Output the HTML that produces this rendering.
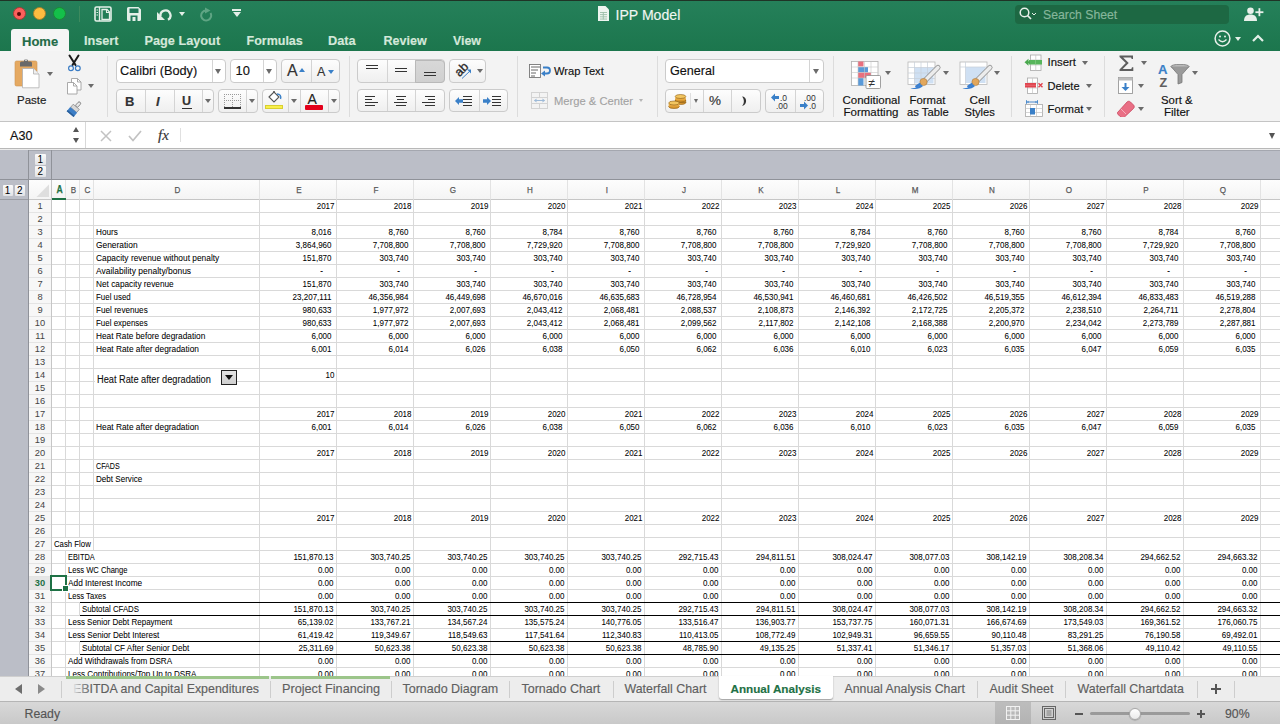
<!DOCTYPE html><html><head><meta charset="utf-8"><style>
*{box-sizing:border-box;margin:0;padding:0}
html,body{width:1280px;height:724px;overflow:hidden;background:#fff}
body{position:relative;font-family:"Liberation Sans",sans-serif;color:#222}
.a{position:absolute}
.t{position:absolute;white-space:nowrap;line-height:1;-webkit-text-stroke:0.15px currentColor}
.grp{position:absolute;border:1px solid #cbcbcb;border-radius:4px;background:linear-gradient(#fdfdfd,#efefef)}
.vd{position:absolute;top:0;bottom:0;width:1px;background:#d4d4d4}
.dd{position:absolute;width:0;height:0;border-left:3.5px solid transparent;border-right:3.5px solid transparent;border-top:5px solid #6b6b6b}
.sep{position:absolute;width:1px;background:#dcdcdc}
.c{position:absolute;white-space:nowrap;font-size:9px;line-height:13px;height:13px;color:#000}
.lb{transform:scaleX(0.928);transform-origin:0 50%;-webkit-text-stroke:0.05px #000}
.nm{transform:scaleX(0.89);transform-origin:100% 50%;-webkit-text-stroke:0.05px #000}
.r{text-align:right}
</style></head><body>
<div class="a" style="left:0;top:0;width:1280px;height:51px;background:linear-gradient(#25805a,#1c764d)"></div><div class="a" style="left:0;top:0;width:1280px;height:1px;background:#1f3326"></div><div class="a" style="left:12.5px;top:7px;width:13px;height:13px;border-radius:50%;background:#fc605c;border:0.8px solid #a83a36"></div><div class="a" style="left:32.5px;top:7px;width:13px;height:13px;border-radius:50%;background:#fdbc40;border:0.8px solid #a8802a"></div><div class="a" style="left:52.5px;top:7px;width:13px;height:13px;border-radius:50%;background:#14c04a;border:0.8px solid #1a8a35"></div><div class="a" style="left:17px;top:11.5px;width:4px;height:4px;border-radius:50%;background:#5a0a08"></div><div class="a" style="left:78.5px;top:6px;width:1px;height:16px;background:#3d8a5e"></div><svg class="a" style="left:94px;top:6px" width="18" height="16" viewBox="0 0 18 16"><rect x="1" y="1" width="16" height="14" rx="1.5" fill="none" stroke="#e4efe8" stroke-width="1.6"/><line x1="5.5" y1="1" x2="5.5" y2="15" stroke="#e4efe8" stroke-width="1.4"/><rect x="2.5" y="3.5" width="1.5" height="1" fill="#e4efe8"/><rect x="2.5" y="6" width="1.5" height="1" fill="#e4efe8"/><rect x="2.5" y="8.5" width="1.5" height="1" fill="#e4efe8"/><path d="M8 3.5h5l2.5 2.5v7.5h-7.5z" fill="none" stroke="#e4efe8" stroke-width="1.3"/><path d="M12.5 3.5v3h3" fill="none" stroke="#e4efe8" stroke-width="1.1"/></svg><svg class="a" style="left:126px;top:6px" width="16" height="16" viewBox="0 0 16 16"><path d="M1 2.5a1.5 1.5 0 0 1 1.5-1.5h10l2.5 2.5v10a1.5 1.5 0 0 1-1.5 1.5h-11A1.5 1.5 0 0 1 1 13.5z" fill="#e4efe8"/><rect x="3.5" y="2.5" width="9" height="4.5" fill="#21795a"/><rect x="4.5" y="9.5" width="7" height="5.5" fill="#21795a"/><rect x="6.5" y="11" width="3" height="4" fill="#e4efe8"/></svg><svg class="a" style="left:155px;top:7px" width="18" height="14" viewBox="0 0 18 14"><path d="M5.5 9a5 5 0 1 1 7.5 3.8" fill="none" stroke="#e4efe8" stroke-width="2.3"/><path d="M2 13v-8l8 8z" fill="#e4efe8"/></svg><div class="dd" style="left:179px;top:12px;border-top-color:#e4efe8;border-left-width:3px;border-right-width:3px;border-top-width:4px"></div><svg class="a" style="left:199px;top:7px" width="14" height="15" viewBox="0 0 14 15"><path d="M7 3.5A5 5 0 1 0 11.5 6" fill="none" stroke="#5fa584" stroke-width="2"/><path d="M6 0.5l5.5 3-5.5 3z" fill="#5fa584"/></svg><div class="a" style="left:232px;top:9px;width:9px;height:1.5px;background:#e4efe8"></div><div class="dd" style="left:232.5px;top:12px;border-top-color:#e4efe8;border-left-width:4px;border-right-width:4px;border-top-width:5px"></div><svg class="a" style="left:598px;top:6px" width="11" height="15" viewBox="0 0 11 15"><path d="M0 0h7.5l3.5 3.5V15H0z" fill="#eef5f0"/><g fill="#9bbfa8"><rect x="2" y="6" width="7" height="0.9"/><rect x="2" y="8.2" width="7" height="0.9"/><rect x="2" y="10.4" width="7" height="0.9"/><rect x="2" y="12.6" width="7" height="0.9"/><rect x="4.8" y="6" width="0.9" height="7.5"/></g></svg><div class="t" style="left:615.5px;top:8px;font-size:14.1px;color:#f0f6f2">IPP Model</div><div class="a" style="left:1015px;top:4.5px;width:214px;height:19px;border-radius:4px;background:#1d6843"></div><svg class="a" style="left:1019px;top:7px" width="18" height="13" viewBox="0 0 18 13"><circle cx="5.5" cy="5.5" r="4.3" fill="none" stroke="#e8f0ea" stroke-width="1.5"/><line x1="8.5" y1="8.5" x2="12" y2="12" stroke="#e8f0ea" stroke-width="1.7"/><path d="M13 6l2 2 2-2" fill="none" stroke="#e8f0ea" stroke-width="1"/></svg><div class="t" style="left:1043px;top:8.5px;font-size:12.25px;color:#86b69b">Search Sheet</div><svg class="a" style="left:1244px;top:7px" width="20" height="14" viewBox="0 0 20 14"><circle cx="6.5" cy="3.8" r="3.3" fill="#e8f0ea"/><path d="M0 14c0-4.5 2.5-6.5 6.5-6.5S13 9.5 13 14z" fill="#e8f0ea"/><rect x="14.5" y="1.2" width="1.8" height="8" fill="#e8f0ea"/><rect x="11.4" y="4.3" width="8" height="1.8" fill="#e8f0ea"/></svg><div class="a" style="left:11px;top:29px;width:58px;height:22px;background:#f5f5f5;border-radius:3px 3px 0 0"></div><div class="t" style="left:22px;top:34.5px;font-size:13px;font-weight:bold;color:#236b47">Home</div><div class="t" style="left:84px;top:34.5px;font-size:12.67px;font-weight:bold;color:#d4e8da">Insert</div><div class="t" style="left:144.5px;top:34.5px;font-size:12.72px;font-weight:bold;color:#d4e8da">Page Layout</div><div class="t" style="left:246.5px;top:34.5px;font-size:12.51px;font-weight:bold;color:#d4e8da">Formulas</div><div class="t" style="left:328px;top:34.5px;font-size:12.8px;font-weight:bold;color:#d4e8da">Data</div><div class="t" style="left:383.5px;top:34.5px;font-size:12.54px;font-weight:bold;color:#d4e8da">Review</div><div class="t" style="left:453px;top:34.5px;font-size:12.4px;font-weight:bold;color:#d4e8da">View</div><svg class="a" style="left:1214px;top:30px" width="17" height="17" viewBox="0 0 17 17"><circle cx="8.5" cy="8.5" r="7.4" fill="none" stroke="#e8f0ea" stroke-width="1.5"/><circle cx="6" cy="6.5" r="1" fill="#e8f0ea"/><circle cx="11" cy="6.5" r="1" fill="#e8f0ea"/><path d="M4.5 9.5q4 4.5 8 0" fill="none" stroke="#e8f0ea" stroke-width="1.3"/></svg><div class="dd" style="left:1235px;top:37px;border-top-color:#e4efe8;border-left-width:3px;border-right-width:3px;border-top-width:4px"></div><svg class="a" style="left:1252px;top:34px" width="12" height="8" viewBox="0 0 12 8"><path d="M1 7l5-5 5 5" fill="none" stroke="#e4efe8" stroke-width="2.2"/></svg><div class="a" style="left:0;top:51px;width:1280px;height:70px;background:#f3f3f3"></div><div class="a" style="left:0;top:121px;width:1280px;height:1px;background:#c4c4c4"></div><svg class="a" style="left:14px;top:57px" width="28" height="33" viewBox="0 0 28 33"><rect x="1" y="4" width="22" height="25" rx="1.5" fill="#e5a961" stroke="#cf9350" stroke-width="0.6"/><path d="M6 9.5v-3.5a1.5 1.5 0 0 1 1.5-1.5h2.3a2.2 2.2 0 0 1 4.4 0h2.3a1.5 1.5 0 0 1 1.5 1.5v3.5z" fill="#6a6a6a"/><circle cx="12" cy="3.2" r="0.9" fill="#ddd"/><path d="M8.5 11.5h11l5.5 5.5v13.8h-16.5z" fill="#fff" stroke="#b0b0b0" stroke-width="0.8"/><path d="M19.5 11.5v5.5h5.5" fill="#f0f0f0" stroke="#b0b0b0" stroke-width="0.8"/></svg><div class="dd" style="left:47.0px;top:71.75px;border-left-width:3.5px;border-right-width:3.5px;border-top-width:4.5px;border-top-color:#6b6b6b"></div><div class="t" style="left:17px;top:95px;font-size:11.5px;color:#222;">Paste</div><svg class="a" style="left:66px;top:54px" width="16" height="18" viewBox="0 0 16 18"><path d="M3.5 1.5l6 9.5M12.5 1.5l-6 9.5" stroke="#1a1a1a" stroke-width="2" stroke-linecap="round"/><circle cx="5" cy="14.2" r="2.4" fill="none" stroke="#3a7cc4" stroke-width="1.2"/><circle cx="11.8" cy="14.2" r="2.4" fill="none" stroke="#3a7cc4" stroke-width="1.2"/></svg><svg class="a" style="left:66px;top:77px" width="16" height="18" viewBox="0 0 16 18"><path d="M5.5 1.5h6l3.5 3.5v8h-9.5z" fill="#fff" stroke="#a0a0a0" stroke-width="0.9"/><path d="M11.5 1.5v3.5h3.5" fill="none" stroke="#a0a0a0" stroke-width="0.9"/><path d="M1.5 5.5h6l3.5 3.5v8h-9.5z" fill="#fff" stroke="#a0a0a0" stroke-width="0.9"/><path d="M7.5 5.5v3.5h3.5" fill="none" stroke="#a0a0a0" stroke-width="0.9"/></svg><div class="dd" style="left:88.0px;top:83.75px;border-left-width:3.5px;border-right-width:3.5px;border-top-width:4.5px;border-top-color:#6b6b6b"></div><svg class="a" style="left:65px;top:101px" width="18" height="17" viewBox="0 0 18 17"><g transform="rotate(40 9 8.5)"><rect x="7.5" y="-1" width="3" height="6" rx="1.5" fill="#e8e8e8" stroke="#777" stroke-width="0.8"/><rect x="5" y="5" width="8" height="4" fill="#d8d8d8" stroke="#888" stroke-width="0.7"/><path d="M4.5 9h9v5.5h-9z" fill="#3c7ec6"/><path d="M4.5 13h9v1.5h-9z" fill="#2a5f9a"/></g></svg><div class="sep" style="left:107px;top:56px;height:61px"></div><div class="grp" style="left:115.5px;top:59px;width:110.0px;height:23.5px;background:#fff"><div class="vd" style="left:95.5px"></div></div><div class="t" style="left:120px;top:65px;font-size:12.75px;color:#111;">Calibri (Body)</div><div class="dd" style="left:215.0px;top:69.0px;border-left-width:3.5px;border-right-width:3.5px;border-top-width:5px;border-top-color:#6b6b6b"></div><div class="grp" style="left:230.0px;top:59px;width:46.5px;height:23.5px;background:#fff"><div class="vd" style="left:31.5px"></div></div><div class="t" style="left:235.5px;top:65px;font-size:12.9px;color:#111;">10</div><div class="dd" style="left:266.0px;top:69.0px;border-left-width:3.5px;border-right-width:3.5px;border-top-width:5px;border-top-color:#6b6b6b"></div><div class="grp" style="left:280.5px;top:59px;width:59.0px;height:23.5px;"><div class="vd" style="left:29.0px"></div></div><div class="t" style="left:287px;top:63px;font-size:16px;color:#333;">A</div><div class="a" style="left:299px;top:68px;width:0;height:0;border-left:3.5px solid transparent;border-right:3.5px solid transparent;border-bottom:4px solid #3a80c8"></div><div class="t" style="left:317px;top:66px;font-size:12.5px;color:#333;">A</div><div class="a" style="left:328px;top:70px;width:0;height:0;border-left:3.5px solid transparent;border-right:3.5px solid transparent;border-top:4px solid #3a80c8"></div><div class="grp" style="left:115.5px;top:89px;width:98.0px;height:23.5px;"><div class="vd" style="left:28.0px"></div><div class="vd" style="left:57.0px"></div><div class="vd" style="left:85.0px"></div></div><div class="t" style="left:125px;top:94.5px;font-size:13px;color:#333;font-weight:bold">B</div><div class="t" style="left:156px;top:94.5px;font-size:13px;color:#333;font-style:italic;font-weight:bold">I</div><div class="t" style="left:182px;top:94.5px;font-size:12.5px;color:#333;font-weight:bold">U</div><div class="a" style="left:182px;top:107.5px;width:9.5px;height:1px;background:#333"></div><div class="dd" style="left:204.5px;top:98.75px;border-left-width:3px;border-right-width:3px;border-top-width:4.5px;border-top-color:#6b6b6b"></div><div class="grp" style="left:218.0px;top:89px;width:40.0px;height:23.5px;"><div class="vd" style="left:26.5px"></div></div><div class="a" style="left:224px;top:93.5px;width:17px;height:13px;border:1px dotted #9a9a9a;border-bottom:none"></div><div class="a" style="left:232px;top:93.5px;width:1px;height:13px;border-left:1px dotted #9a9a9a"></div><div class="a" style="left:224px;top:100px;width:17px;height:1px;border-top:1px dotted #9a9a9a"></div><div class="a" style="left:224px;top:107px;width:17px;height:1.5px;background:#333"></div><div class="dd" style="left:248.5px;top:98.75px;border-left-width:3px;border-right-width:3px;border-top-width:4.5px;border-top-color:#6b6b6b"></div><div class="grp" style="left:262.0px;top:89px;width:78.0px;height:23.5px;"><div class="vd" style="left:24.5px"></div><div class="vd" style="left:37.0px"></div><div class="vd" style="left:64.5px"></div></div><svg class="a" style="left:267px;top:91px" width="16" height="14" viewBox="0 0 16 14"><path d="M2 6l5-5 5 5-5 5z" fill="#fff" stroke="#555" stroke-width="1.1"/><path d="M7 1v-1" stroke="#555" stroke-width="1.5"/><path d="M10 3c3 0 4.5 2 3.5 5" fill="none" stroke="#3a80c8" stroke-width="1.4"/></svg><div class="a" style="left:265px;top:105px;width:18px;height:4px;background:#f8ef4b;border:0.5px solid #d8cf30"></div><div class="dd" style="left:290.5px;top:98.75px;border-left-width:3px;border-right-width:3px;border-top-width:4.5px;border-top-color:#6b6b6b"></div><div class="t" style="left:307.5px;top:92px;font-size:14px;color:#222;">A</div><div class="a" style="left:305px;top:105px;width:18px;height:5px;background:#e3001b;border-radius:1px"></div><div class="dd" style="left:330.5px;top:98.75px;border-left-width:3px;border-right-width:3px;border-top-width:4.5px;border-top-color:#6b6b6b"></div><div class="sep" style="left:349px;top:56px;height:61px"></div><div class="grp" style="left:357.0px;top:58.5px;width:88.0px;height:24.0px;"><div class="vd" style="left:28.5px"></div><div class="vd" style="left:57.0px"></div></div><div class="a" style="left:415px;top:59.5px;width:29.5px;height:23px;background:linear-gradient(#d8d8d8,#d0d0d0);border:1px solid #b9b9b9;border-radius:0 4px 4px 0"></div><div class="a" style="left:366px;top:65px;width:12px;height:1.3px;background:#333"></div><div class="a" style="left:366px;top:68px;width:12px;height:1.3px;background:#333"></div><div class="a" style="left:395px;top:68px;width:12px;height:1.3px;background:#333"></div><div class="a" style="left:395px;top:71px;width:12px;height:1.3px;background:#333"></div><div class="a" style="left:424px;top:72px;width:12px;height:1.3px;background:#333"></div><div class="a" style="left:424px;top:75px;width:12px;height:1.3px;background:#333"></div><div class="grp" style="left:449.0px;top:58.5px;width:37.0px;height:24.0px;"></div><svg class="a" style="left:452px;top:60px" width="24" height="22" viewBox="0 0 24 22"><text x="9.5" y="13.5" text-anchor="middle" transform="rotate(-45 9.5 9.5)" font-family="Liberation Sans" font-size="12.5" fill="#2a2a2a" stroke="#2a2a2a" stroke-width="0.3">ab</text><path d="M10 18.5l8.5-8" stroke="#3a80c8" stroke-width="1"/><path d="M15 9.5h4v4z" fill="#3a80c8"/></svg><div class="dd" style="left:476.5px;top:68.75px;border-left-width:3px;border-right-width:3px;border-top-width:4.5px;border-top-color:#6b6b6b"></div><div class="grp" style="left:357.0px;top:89px;width:88.0px;height:23px;"><div class="vd" style="left:28.5px"></div><div class="vd" style="left:57.0px"></div></div><div class="a" style="left:365px;top:96px;width:10px;height:1.1px;background:#333"></div><div class="a" style="left:365px;top:99px;width:7px;height:1.1px;background:#333"></div><div class="a" style="left:365px;top:102px;width:13px;height:1.1px;background:#333"></div><div class="a" style="left:365px;top:105px;width:10px;height:1.1px;background:#333"></div><div class="a" style="left:395.5px;top:96px;width:10px;height:1.1px;background:#333"></div><div class="a" style="left:397.0px;top:99px;width:7px;height:1.1px;background:#333"></div><div class="a" style="left:394.0px;top:102px;width:13px;height:1.1px;background:#333"></div><div class="a" style="left:395.5px;top:105px;width:10px;height:1.1px;background:#333"></div><div class="a" style="left:425px;top:96px;width:10px;height:1.1px;background:#333"></div><div class="a" style="left:428px;top:99px;width:7px;height:1.1px;background:#333"></div><div class="a" style="left:422px;top:102px;width:13px;height:1.1px;background:#333"></div><div class="a" style="left:425px;top:105px;width:10px;height:1.1px;background:#333"></div><div class="grp" style="left:449.0px;top:89px;width:59.0px;height:23px;"><div class="vd" style="left:28.5px"></div></div><div class="a" style="left:463px;top:96px;width:9px;height:1.1px;background:#333"></div><div class="a" style="left:463px;top:99px;width:9px;height:1.1px;background:#333"></div><div class="a" style="left:463px;top:102px;width:9px;height:1.1px;background:#333"></div><div class="a" style="left:463px;top:105px;width:9px;height:1.1px;background:#333"></div><div class="a" style="left:492px;top:96px;width:9px;height:1.1px;background:#333"></div><div class="a" style="left:492px;top:99px;width:9px;height:1.1px;background:#333"></div><div class="a" style="left:492px;top:102px;width:9px;height:1.1px;background:#333"></div><div class="a" style="left:492px;top:105px;width:9px;height:1.1px;background:#333"></div><svg class="a" style="left:455px;top:97px" width="8" height="8" viewBox="0 0 8 8"><path d="M0 4l4-4v2.2h4v3.6h-4v2.2z" fill="#3a80c8"/></svg><svg class="a" style="left:483px;top:97px" width="8" height="8" viewBox="0 0 8 8"><path d="M8 4l-4-4v2.2h-4v3.6h4v2.2z" fill="#3a80c8"/></svg><div class="sep" style="left:517px;top:56px;height:61px"></div><svg class="a" style="left:529px;top:64px" width="22" height="15" viewBox="0 0 22 15"><rect x="0.5" y="0.5" width="11" height="13" fill="#fff" stroke="#777" stroke-width="0.9"/><path d="M2 3h9M2 6h7M2 9h5M2 12h4" stroke="#555" stroke-width="0.9"/><path d="M14 3.5h4a3 3 0 0 1 0 6h-3" fill="none" stroke="#3a80c8" stroke-width="1.8"/><path d="M12 9.5l4-3v6z" fill="#3a80c8"/></svg><div class="t" style="left:554px;top:65.5px;font-size:11.15px;color:#111;">Wrap Text</div><svg class="a" style="left:531px;top:92px" width="17" height="17" viewBox="0 0 17 17"><rect x="0.5" y="0.5" width="16" height="16" fill="none" stroke="#d3d3d3"/><path d="M0.5 5.5h16M0.5 11.5h16M8.5 0.5v5M8.5 11.5v5" stroke="#d3d3d3"/><path d="M3.5 8.5h10" stroke="#9dbad8" stroke-width="1"/><path d="M3 8.5l2.5-2v4zM14 8.5l-2.5-2v4z" fill="#9dbad8"/></svg><div class="t" style="left:554px;top:95.5px;font-size:11.2px;color:#a3a3a3;">Merge &amp; Center</div><div class="dd" style="left:638.5px;top:99.25px;border-left-width:2.5px;border-right-width:2.5px;border-top-width:3.5px;border-top-color:#b5b5b5"></div><div class="sep" style="left:656.5px;top:56px;height:61px"></div><div class="grp" style="left:665.0px;top:58.5px;width:159.0px;height:24.0px;background:#fff"><div class="vd" style="left:143.0px"></div></div><div class="t" style="left:670px;top:65px;font-size:12.6px;color:#111;">General</div><div class="dd" style="left:813.0px;top:68.5px;border-left-width:3.5px;border-right-width:3.5px;border-top-width:5px;border-top-color:#6b6b6b"></div><div class="grp" style="left:665.0px;top:88.5px;width:96.0px;height:24.0px;"><div class="vd" style="left:36.75px"></div><div class="vd" style="left:65.25px"></div></div><div class="a" style="left:690px;top:93px;width:1px;height:16px;background:#dedede"></div><svg class="a" style="left:667px;top:93px" width="20" height="17" viewBox="0 0 20 17"><g stroke="#8a5a12" stroke-width="0.6"><ellipse cx="13.5" cy="9.5" rx="5.3" ry="2" fill="#d8962e"/><rect x="8.2" y="7.5" width="10.6" height="2" fill="#e6a840"/><ellipse cx="13.5" cy="7" rx="5.3" ry="2" fill="#d8962e"/><rect x="8.2" y="4.5" width="10.6" height="2.5" fill="#e6a840" stroke="none"/><ellipse cx="13.5" cy="3.5" rx="5.3" ry="2" fill="#f2c560"/><ellipse cx="7" cy="13.5" rx="5.3" ry="2" fill="#d8962e"/><rect x="1.7" y="10.5" width="10.6" height="3" fill="#e6a840" stroke="none"/><ellipse cx="7" cy="10" rx="5.3" ry="2" fill="#f2c560"/></g></svg><div class="dd" style="left:694.0px;top:99.0px;border-left-width:2.5px;border-right-width:2.5px;border-top-width:4px;border-top-color:#6b6b6b"></div><div class="t" style="left:709px;top:94px;font-size:13.5px;color:#333;">%</div><svg class="a" style="left:741px;top:95px" width="8" height="12" viewBox="0 0 8 12"><path d="M1 1.5c5 0 6 8 0 9.5 2.5-2 2.5-7 0-9.5z" fill="#333"/></svg><div class="grp" style="left:764.5px;top:88.5px;width:59.5px;height:24.0px;"><div class="vd" style="left:29.0px"></div></div><svg class="a" style="left:771px;top:92px" width="20" height="18" viewBox="0 0 20 18"><path d="M0 5.5l4-4v2.5h4v3h-4v2.5z" fill="#3a80c8"/><text x="9" y="8.5" font-family="Liberation Sans" font-size="8.5" fill="#333">.0</text><text x="5" y="16.5" font-family="Liberation Sans" font-size="8.5" fill="#333">.00</text></svg><svg class="a" style="left:799px;top:92px" width="20" height="18" viewBox="0 0 20 18"><text x="5" y="8.5" font-family="Liberation Sans" font-size="8.5" fill="#333">.00</text><path d="M9 13.5l-4-4v2.5h-4v3h4v2.5z" fill="#3a80c8"/><text x="10" y="16.5" font-family="Liberation Sans" font-size="8.5" fill="#333">.0</text></svg><div class="sep" style="left:833px;top:56px;height:61px"></div><svg class="a" style="left:850px;top:60px" width="32" height="30" viewBox="0 0 32 30"><rect x="1.5" y="1.5" width="26.5" height="24" fill="#fff" stroke="#b0b0b0" stroke-width="0.8"/><rect x="8" y="1.5" width="5.5" height="5" fill="#e8707e"/><rect x="8" y="7" width="10" height="5.5" fill="#5a9ad8"/><rect x="8" y="12.5" width="13" height="5.5" fill="#e8707e"/><rect x="8" y="18" width="5.5" height="7.5" fill="#5a9ad8"/><path d="M1.5 7h26.5M1.5 12.5h26.5M1.5 18h26.5M8 1.5v24M14.5 1.5v24M21 1.5v24" stroke="#c8c8c8" stroke-width="0.6"/><rect x="16" y="15.5" width="14.5" height="13" rx="1" fill="#fff" stroke="#8a8a8a" stroke-width="0.8"/><text x="18.5" y="26.5" font-family="Liberation Sans" font-size="12" fill="#333">≠</text></svg><div class="dd" style="left:885px;top:71.25px;border-left-width:3px;border-right-width:3px;border-top-width:4.5px;border-top-color:#6b6b6b"></div><div class="t" style="left:842.5px;top:94.7px;font-size:11.5px;color:#111;">Conditional</div><div class="t" style="left:843.5px;top:106.9px;font-size:11.5px;color:#111;">Formatting</div><svg class="a" style="left:906px;top:61px" width="36" height="30" viewBox="0 0 36 30"><rect x="2" y="1" width="27" height="22.5" fill="#fff" stroke="#b8b8b8" stroke-width="0.8"/><rect x="8.5" y="6.5" width="19" height="16" fill="#cfe0f3"/><path d="M2 6.5h27M2 12h27M2 17.5h27M8.5 1v22.5M15 1v22.5M21.5 1v22.5" stroke="#c5cfd8" stroke-width="0.7"/><path d="M19.5 19l12.5-12.5" stroke="#8a8a8a" stroke-width="5" stroke-linecap="round"/><path d="M19.5 19l12.5-12.5" stroke="#ececec" stroke-width="3.6" stroke-linecap="round"/><circle cx="17.5" cy="21" r="3.6" fill="#e2a75c" stroke="#a9783c" stroke-width="0.6"/><path d="M15 23.5c-2 1-3.5 2.5-5.5 3.2-1.5 0.5-3.5 0.4-5 0.2 3 1.8 9.5 1.6 12.5-1.8z" fill="#3a7fd0"/><path d="M14.5 22.8c-1.5 0.6-3 2.2-5 3.2" stroke="#3a7fd0" stroke-width="2.5"/></svg><div class="dd" style="left:943px;top:71.25px;border-left-width:3px;border-right-width:3px;border-top-width:4.5px;border-top-color:#6b6b6b"></div><div class="t" style="left:909.5px;top:94.7px;font-size:11.33px;color:#111;">Format</div><div class="t" style="left:907px;top:106.9px;font-size:11.24px;color:#111;">as Table</div><svg class="a" style="left:958px;top:61px" width="36" height="30" viewBox="0 0 36 30"><rect x="2" y="1" width="27" height="22.5" fill="#fff" stroke="#b8b8b8" stroke-width="0.8"/><rect x="7.5" y="6" width="20" height="16" fill="#cfe0f3"/><path d="M2 6h27M7.5 1v22.5" stroke="#c5cfd8" stroke-width="0.7"/><path d="M19.5 19l12.5-12.5" stroke="#8a8a8a" stroke-width="5" stroke-linecap="round"/><path d="M19.5 19l12.5-12.5" stroke="#ececec" stroke-width="3.6" stroke-linecap="round"/><circle cx="17.5" cy="21" r="3.6" fill="#e2a75c" stroke="#a9783c" stroke-width="0.6"/><path d="M15 23.5c-2 1-3.5 2.5-5.5 3.2-1.5 0.5-3.5 0.4-5 0.2 3 1.8 9.5 1.6 12.5-1.8z" fill="#3a7fd0"/><path d="M14.5 22.8c-1.5 0.6-3 2.2-5 3.2" stroke="#3a7fd0" stroke-width="2.5"/></svg><div class="dd" style="left:993.5px;top:71.25px;border-left-width:3px;border-right-width:3px;border-top-width:4.5px;border-top-color:#6b6b6b"></div><div class="t" style="left:969.5px;top:94.7px;font-size:11.8px;color:#111;">Cell</div><div class="t" style="left:964.5px;top:106.9px;font-size:11.16px;color:#111;">Styles</div><div class="sep" style="left:1011px;top:56px;height:61px"></div><svg class="a" style="left:1024px;top:54px" width="20" height="18" viewBox="0 0 20 18"><rect x="6.5" y="1" width="10.5" height="15.5" fill="#fff" stroke="#a8a8a8" stroke-width="0.8"/><path d="M6.5 6h10.5M6.5 11h10.5M11.75 1v15.5" stroke="#c4c4c4" stroke-width="0.7"/><rect x="5" y="6" width="13" height="4.5" fill="#58b65c"/><path d="M11.5 6v4.5" stroke="#8fd08f" stroke-width="0.6"/><path d="M0.5 8.25l4-3.6v7.2z" fill="#49a84d"/><rect x="3" y="7.3" width="3" height="2" fill="#49a84d"/></svg><div class="t" style="left:1047.5px;top:57.4px;font-size:11.35px;color:#111;">Insert</div><div class="dd" style="left:1081.5px;top:60.75px;border-left-width:3px;border-right-width:3px;border-top-width:4.5px;border-top-color:#6b6b6b"></div><svg class="a" style="left:1024px;top:77px" width="21" height="18" viewBox="0 0 21 18"><rect x="3.5" y="1" width="10" height="15.5" fill="#fff" stroke="#a8a8a8" stroke-width="0.8"/><path d="M3.5 6h10M3.5 11h10M8.5 1v15.5" stroke="#c4c4c4" stroke-width="0.7"/><rect x="1" y="6" width="11" height="4.5" fill="#e0444e"/><path d="M1 8.25h11" stroke="#f08a90" stroke-width="0.5"/><path d="M14.5 6.2l4 4M18.5 6.2l-4 4" stroke="#e0444e" stroke-width="1.4"/></svg><div class="t" style="left:1047.5px;top:80.5px;font-size:11.1px;color:#111;">Delete</div><div class="dd" style="left:1085.5px;top:83.75px;border-left-width:3px;border-right-width:3px;border-top-width:4.5px;border-top-color:#6b6b6b"></div><svg class="a" style="left:1024px;top:99px" width="20" height="19" viewBox="0 0 20 19"><path d="M3 3h10M2.5 1.2v3.6M13.5 1.2v3.6" stroke="#3a80c8" stroke-width="0.9"/><path d="M3 3l1.5-1.2v2.4zM13 3l-1.5-1.2v2.4z" fill="#3a80c8"/><rect x="1.5" y="5.5" width="17" height="12" fill="#fff" stroke="#a8a8a8" stroke-width="0.8"/><path d="M1.5 9.5h17M1.5 13.5h17M6.5 5.5v12M12.5 5.5v12" stroke="#c4c4c4" stroke-width="0.7"/><rect x="6" y="9" width="5" height="6.5" fill="#3a80c8"/></svg><div class="t" style="left:1047.5px;top:103.5px;font-size:11.33px;color:#111;">Format</div><div class="dd" style="left:1085.5px;top:106.75px;border-left-width:3px;border-right-width:3px;border-top-width:4.5px;border-top-color:#6b6b6b"></div><div class="sep" style="left:1104px;top:56px;height:61px"></div><svg class="a" style="left:1119px;top:55px" width="15" height="16" viewBox="0 0 15 16"><path d="M0.5 0.5h13.5v3.5h-1.3l-0.6-1.6h-8l5.6 5.6-6 6h8.6l0.7-1.7h1.3v3.7h-13.8v-1.6l6.3-6.4-6.3-6z" fill="#5e5e5e"/></svg><div class="dd" style="left:1140.5px;top:60.75px;border-left-width:3px;border-right-width:3px;border-top-width:4.5px;border-top-color:#6b6b6b"></div><svg class="a" style="left:1118px;top:77px" width="15" height="17" viewBox="0 0 15 17"><rect x="0.5" y="0.5" width="14" height="16" fill="#fff" stroke="#999" stroke-width="0.9"/><rect x="0.5" y="0.5" width="14" height="3" fill="#bbb"/><path d="M7.5 6v5" stroke="#3a80c8" stroke-width="2"/><path d="M3.5 10h8l-4 4z" fill="#3a80c8"/></svg><div class="dd" style="left:1137.5px;top:83.75px;border-left-width:3px;border-right-width:3px;border-top-width:4.5px;border-top-color:#6b6b6b"></div><svg class="a" style="left:1117px;top:100px" width="18" height="17" viewBox="0 0 18 17"><path d="M1 12l9-10c1-1 2.5-1 3.5 0l3 3c1 1 1 2.5 0 3.5l-9 8.5c-1 1-2.5 1-3.5 0l-3-2.5c-1-0.8-1-2-0-2.5z" fill="#e96f85" stroke="#c94660" stroke-width="0.8"/><path d="M4 9l5 5" stroke="#f8c0cc" stroke-width="0.8"/></svg><div class="dd" style="left:1137.5px;top:106.75px;border-left-width:3px;border-right-width:3px;border-top-width:4.5px;border-top-color:#6b6b6b"></div><div class="t" style="left:1158px;top:62.5px;font-size:13.2px;color:#3a80c8;font-weight:bold">A</div><div class="t" style="left:1159.5px;top:76.5px;font-size:12.5px;color:#5e5e5e;font-weight:bold">Z</div><svg class="a" style="left:1170px;top:64px" width="20" height="21" viewBox="0 0 20 21"><ellipse cx="10" cy="2.5" rx="9" ry="2.2" fill="#bbb" stroke="#777" stroke-width="0.8"/><path d="M1 2.5l7 8v9.5l4-1.5v-8l7-8" fill="#9a9a9a" stroke="#777" stroke-width="0.8"/></svg><div class="dd" style="left:1192px;top:70.75px;border-left-width:3px;border-right-width:3px;border-top-width:4.5px;border-top-color:#6b6b6b"></div><div class="t" style="left:1161px;top:95px;font-size:11.35px;color:#111;">Sort &amp;</div><div class="t" style="left:1164px;top:106.7px;font-size:11.55px;color:#111;">Filter</div><div class="a" style="left:0;top:122px;width:1280px;height:27px;background:#fff"></div><div class="a" style="left:0;top:148px;width:1280px;height:1px;background:#b8b8b8"></div><div class="a" style="left:0;top:149px;width:1280px;height:1px;background:#ececec"></div><div class="a" style="left:0;top:150px;width:1280px;height:1px;background:#a4a7af"></div><div class="a" style="left:85px;top:122px;width:1px;height:26px;background:#d8d8d8"></div><div class="t" style="left:10px;top:130.2px;font-size:12.6px;color:#111;">A30</div><div class="a" style="left:72.5px;top:127px;width:0;height:0;border-left:3.8px solid transparent;border-right:3.8px solid transparent;border-bottom:5px solid #555"></div><div class="a" style="left:72.5px;top:138px;width:0;height:0;border-left:3.8px solid transparent;border-right:3.8px solid transparent;border-top:5px solid #555"></div><svg class="a" style="left:100px;top:130px" width="12" height="12" viewBox="0 0 12 12"><path d="M1 1l10 10M11 1l-10 10" stroke="#c2c2c2" stroke-width="1.5"/></svg><svg class="a" style="left:128px;top:130px" width="14" height="12" viewBox="0 0 14 12"><path d="M1 6l4 4.5 8-9.5" fill="none" stroke="#c2c2c2" stroke-width="1.7"/></svg><div class="t" style="left:158px;top:128px;font-size:15px;color:#333;font-family:Liberation Serif;font-style:italic">fx</div><div class="a" style="left:180px;top:128px;width:1px;height:14px;background:#e0e0e0"></div><div class="dd" style="left:1269px;top:133px;border-left-width:3.5px;border-right-width:3.5px;border-top-width:6px;border-top-color:#555"></div><div class="a" style="left:0;top:151px;width:1280px;height:29px;background:#bbbec7"></div><div class="a" style="left:0;top:150px;width:29px;height:526px;background:#bbbec7"></div><div class="a" style="left:0;top:179px;width:1280px;height:1px;background:#8f9299"></div><div class="a" style="left:28px;top:150px;width:1px;height:526px;background:#8f9299"></div><div class="a" style="left:51px;top:150px;width:1px;height:29px;background:#8f9299"></div><div class="a" style="left:0;top:199px;width:28px;height:1px;background:#9a9ca3"></div><div class="a" style="left:35px;top:154px;width:10.5px;height:11px;background:linear-gradient(#fafafa,#e2e3e6);border-radius:1px;font-size:10px;line-height:11px;text-align:center;color:#000">1</div><div class="a" style="left:35px;top:165.5px;width:10.5px;height:11px;background:linear-gradient(#fafafa,#e2e3e6);border-radius:1px;font-size:10px;line-height:11px;text-align:center;color:#000">2</div><div class="a" style="left:2.5px;top:184.5px;width:10px;height:11.5px;background:linear-gradient(#fafafa,#e2e3e6);border-radius:1px;font-size:10px;line-height:11.5px;text-align:center;color:#000">1</div><div class="a" style="left:14.5px;top:184.5px;width:10.5px;height:11.5px;background:linear-gradient(#fafafa,#e2e3e6);border-radius:1px;font-size:10px;line-height:11.5px;text-align:center;color:#000">2</div><div class="a" style="left:29px;top:180px;width:1251px;height:19px;background:linear-gradient(#fdfdfd,#f4f4f4)"></div><div class="a" style="left:29px;top:199px;width:22px;height:477px;background:#f7f7f7"></div><svg class="a" style="left:36px;top:184px" width="14" height="14" viewBox="0 0 14 14"><path d="M13 0.5V13H0.5z" fill="#dedede"/></svg><div class="a" style="left:65px;top:180px;width:1px;height:19px;background:#e3e3e3"></div><div class="t" style="left:53px;top:184.6px;width:13px;text-align:center;color:#1e7145;font-size:10px;font-weight:bold;transform:scaleX(0.86);-webkit-text-stroke:0.25px #1e7145">A</div><div class="a" style="left:79px;top:180px;width:1px;height:19px;background:#e3e3e3"></div><div class="t" style="left:67px;top:184.6px;width:13px;text-align:center;color:#585858;font-size:9.4px;transform:scaleX(0.86);-webkit-text-stroke:0.25px #585858">B</div><div class="a" style="left:93px;top:180px;width:1px;height:19px;background:#e3e3e3"></div><div class="t" style="left:81px;top:184.6px;width:13px;text-align:center;color:#585858;font-size:9.4px;transform:scaleX(0.86);-webkit-text-stroke:0.25px #585858">C</div><div class="a" style="left:259px;top:180px;width:1px;height:19px;background:#e3e3e3"></div><div class="t" style="left:95px;top:184.6px;width:165px;text-align:center;color:#585858;font-size:9.4px;transform:scaleX(0.86);-webkit-text-stroke:0.25px #585858">D</div><div class="a" style="left:336px;top:180px;width:1px;height:19px;background:#e3e3e3"></div><div class="t" style="left:261px;top:184.6px;width:76px;text-align:center;color:#585858;font-size:9.4px;transform:scaleX(0.86);-webkit-text-stroke:0.25px #585858">E</div><div class="a" style="left:413px;top:180px;width:1px;height:19px;background:#e3e3e3"></div><div class="t" style="left:338px;top:184.6px;width:76px;text-align:center;color:#585858;font-size:9.4px;transform:scaleX(0.86);-webkit-text-stroke:0.25px #585858">F</div><div class="a" style="left:490px;top:180px;width:1px;height:19px;background:#e3e3e3"></div><div class="t" style="left:415px;top:184.6px;width:76px;text-align:center;color:#585858;font-size:9.4px;transform:scaleX(0.86);-webkit-text-stroke:0.25px #585858">G</div><div class="a" style="left:567px;top:180px;width:1px;height:19px;background:#e3e3e3"></div><div class="t" style="left:492px;top:184.6px;width:76px;text-align:center;color:#585858;font-size:9.4px;transform:scaleX(0.86);-webkit-text-stroke:0.25px #585858">H</div><div class="a" style="left:644px;top:180px;width:1px;height:19px;background:#e3e3e3"></div><div class="t" style="left:569px;top:184.6px;width:76px;text-align:center;color:#585858;font-size:9.4px;transform:scaleX(0.86);-webkit-text-stroke:0.25px #585858">I</div><div class="a" style="left:721px;top:180px;width:1px;height:19px;background:#e3e3e3"></div><div class="t" style="left:646px;top:184.6px;width:76px;text-align:center;color:#585858;font-size:9.4px;transform:scaleX(0.86);-webkit-text-stroke:0.25px #585858">J</div><div class="a" style="left:798px;top:180px;width:1px;height:19px;background:#e3e3e3"></div><div class="t" style="left:723px;top:184.6px;width:76px;text-align:center;color:#585858;font-size:9.4px;transform:scaleX(0.86);-webkit-text-stroke:0.25px #585858">K</div><div class="a" style="left:875px;top:180px;width:1px;height:19px;background:#e3e3e3"></div><div class="t" style="left:800px;top:184.6px;width:76px;text-align:center;color:#585858;font-size:9.4px;transform:scaleX(0.86);-webkit-text-stroke:0.25px #585858">L</div><div class="a" style="left:952px;top:180px;width:1px;height:19px;background:#e3e3e3"></div><div class="t" style="left:877px;top:184.6px;width:76px;text-align:center;color:#585858;font-size:9.4px;transform:scaleX(0.86);-webkit-text-stroke:0.25px #585858">M</div><div class="a" style="left:1029px;top:180px;width:1px;height:19px;background:#e3e3e3"></div><div class="t" style="left:954px;top:184.6px;width:76px;text-align:center;color:#585858;font-size:9.4px;transform:scaleX(0.86);-webkit-text-stroke:0.25px #585858">N</div><div class="a" style="left:1106px;top:180px;width:1px;height:19px;background:#e3e3e3"></div><div class="t" style="left:1031px;top:184.6px;width:76px;text-align:center;color:#585858;font-size:9.4px;transform:scaleX(0.86);-webkit-text-stroke:0.25px #585858">O</div><div class="a" style="left:1183px;top:180px;width:1px;height:19px;background:#e3e3e3"></div><div class="t" style="left:1108px;top:184.6px;width:76px;text-align:center;color:#585858;font-size:9.4px;transform:scaleX(0.86);-webkit-text-stroke:0.25px #585858">P</div><div class="a" style="left:1260px;top:180px;width:1px;height:19px;background:#e3e3e3"></div><div class="t" style="left:1185px;top:184.6px;width:76px;text-align:center;color:#585858;font-size:9.4px;transform:scaleX(0.86);-webkit-text-stroke:0.25px #585858">Q</div><div class="a" style="left:52px;top:199px;width:1228px;height:477px;background:#fff"></div><div class="a" style="left:51px;top:199px;width:1229px;height:1px;background:#d9d9d9"></div><div class="a" style="left:29px;top:199px;width:22px;height:1px;background:#e4e4e4"></div><div class="a" style="left:51px;top:212px;width:1229px;height:1px;background:#d9d9d9"></div><div class="a" style="left:29px;top:212px;width:22px;height:1px;background:#e4e4e4"></div><div class="a" style="left:51px;top:225px;width:1229px;height:1px;background:#d9d9d9"></div><div class="a" style="left:29px;top:225px;width:22px;height:1px;background:#e4e4e4"></div><div class="a" style="left:51px;top:238px;width:1229px;height:1px;background:#d9d9d9"></div><div class="a" style="left:29px;top:238px;width:22px;height:1px;background:#e4e4e4"></div><div class="a" style="left:51px;top:251px;width:1229px;height:1px;background:#d9d9d9"></div><div class="a" style="left:29px;top:251px;width:22px;height:1px;background:#e4e4e4"></div><div class="a" style="left:51px;top:264px;width:1229px;height:1px;background:#d9d9d9"></div><div class="a" style="left:29px;top:264px;width:22px;height:1px;background:#e4e4e4"></div><div class="a" style="left:51px;top:277px;width:1229px;height:1px;background:#d9d9d9"></div><div class="a" style="left:29px;top:277px;width:22px;height:1px;background:#e4e4e4"></div><div class="a" style="left:51px;top:290px;width:1229px;height:1px;background:#d9d9d9"></div><div class="a" style="left:29px;top:290px;width:22px;height:1px;background:#e4e4e4"></div><div class="a" style="left:51px;top:303px;width:1229px;height:1px;background:#d9d9d9"></div><div class="a" style="left:29px;top:303px;width:22px;height:1px;background:#e4e4e4"></div><div class="a" style="left:51px;top:316px;width:1229px;height:1px;background:#d9d9d9"></div><div class="a" style="left:29px;top:316px;width:22px;height:1px;background:#e4e4e4"></div><div class="a" style="left:51px;top:329px;width:1229px;height:1px;background:#d9d9d9"></div><div class="a" style="left:29px;top:329px;width:22px;height:1px;background:#e4e4e4"></div><div class="a" style="left:51px;top:342px;width:1229px;height:1px;background:#d9d9d9"></div><div class="a" style="left:29px;top:342px;width:22px;height:1px;background:#e4e4e4"></div><div class="a" style="left:51px;top:355px;width:1229px;height:1px;background:#d9d9d9"></div><div class="a" style="left:29px;top:355px;width:22px;height:1px;background:#e4e4e4"></div><div class="a" style="left:51px;top:368px;width:1229px;height:1px;background:#d9d9d9"></div><div class="a" style="left:29px;top:368px;width:22px;height:1px;background:#e4e4e4"></div><div class="a" style="left:51px;top:381px;width:1229px;height:1px;background:#d9d9d9"></div><div class="a" style="left:29px;top:381px;width:22px;height:1px;background:#e4e4e4"></div><div class="a" style="left:51px;top:394px;width:1229px;height:1px;background:#d9d9d9"></div><div class="a" style="left:29px;top:394px;width:22px;height:1px;background:#e4e4e4"></div><div class="a" style="left:51px;top:407px;width:1229px;height:1px;background:#d9d9d9"></div><div class="a" style="left:29px;top:407px;width:22px;height:1px;background:#e4e4e4"></div><div class="a" style="left:51px;top:420px;width:1229px;height:1px;background:#d9d9d9"></div><div class="a" style="left:29px;top:420px;width:22px;height:1px;background:#e4e4e4"></div><div class="a" style="left:51px;top:433px;width:1229px;height:1px;background:#d9d9d9"></div><div class="a" style="left:29px;top:433px;width:22px;height:1px;background:#e4e4e4"></div><div class="a" style="left:51px;top:446px;width:1229px;height:1px;background:#d9d9d9"></div><div class="a" style="left:29px;top:446px;width:22px;height:1px;background:#e4e4e4"></div><div class="a" style="left:51px;top:459px;width:1229px;height:1px;background:#d9d9d9"></div><div class="a" style="left:29px;top:459px;width:22px;height:1px;background:#e4e4e4"></div><div class="a" style="left:51px;top:472px;width:1229px;height:1px;background:#d9d9d9"></div><div class="a" style="left:29px;top:472px;width:22px;height:1px;background:#e4e4e4"></div><div class="a" style="left:51px;top:485px;width:1229px;height:1px;background:#d9d9d9"></div><div class="a" style="left:29px;top:485px;width:22px;height:1px;background:#e4e4e4"></div><div class="a" style="left:51px;top:498px;width:1229px;height:1px;background:#d9d9d9"></div><div class="a" style="left:29px;top:498px;width:22px;height:1px;background:#e4e4e4"></div><div class="a" style="left:51px;top:511px;width:1229px;height:1px;background:#d9d9d9"></div><div class="a" style="left:29px;top:511px;width:22px;height:1px;background:#e4e4e4"></div><div class="a" style="left:51px;top:524px;width:1229px;height:1px;background:#d9d9d9"></div><div class="a" style="left:29px;top:524px;width:22px;height:1px;background:#e4e4e4"></div><div class="a" style="left:51px;top:537px;width:1229px;height:1px;background:#d9d9d9"></div><div class="a" style="left:29px;top:537px;width:22px;height:1px;background:#e4e4e4"></div><div class="a" style="left:51px;top:550px;width:1229px;height:1px;background:#d9d9d9"></div><div class="a" style="left:29px;top:550px;width:22px;height:1px;background:#e4e4e4"></div><div class="a" style="left:51px;top:563px;width:1229px;height:1px;background:#d9d9d9"></div><div class="a" style="left:29px;top:563px;width:22px;height:1px;background:#e4e4e4"></div><div class="a" style="left:51px;top:576px;width:1229px;height:1px;background:#d9d9d9"></div><div class="a" style="left:29px;top:576px;width:22px;height:1px;background:#e4e4e4"></div><div class="a" style="left:51px;top:589px;width:1229px;height:1px;background:#d9d9d9"></div><div class="a" style="left:29px;top:589px;width:22px;height:1px;background:#e4e4e4"></div><div class="a" style="left:51px;top:602px;width:1229px;height:1px;background:#d9d9d9"></div><div class="a" style="left:29px;top:602px;width:22px;height:1px;background:#e4e4e4"></div><div class="a" style="left:51px;top:615px;width:1229px;height:1px;background:#d9d9d9"></div><div class="a" style="left:29px;top:615px;width:22px;height:1px;background:#e4e4e4"></div><div class="a" style="left:51px;top:628px;width:1229px;height:1px;background:#d9d9d9"></div><div class="a" style="left:29px;top:628px;width:22px;height:1px;background:#e4e4e4"></div><div class="a" style="left:51px;top:641px;width:1229px;height:1px;background:#d9d9d9"></div><div class="a" style="left:29px;top:641px;width:22px;height:1px;background:#e4e4e4"></div><div class="a" style="left:51px;top:654px;width:1229px;height:1px;background:#d9d9d9"></div><div class="a" style="left:29px;top:654px;width:22px;height:1px;background:#e4e4e4"></div><div class="a" style="left:51px;top:667px;width:1229px;height:1px;background:#d9d9d9"></div><div class="a" style="left:29px;top:667px;width:22px;height:1px;background:#e4e4e4"></div><div class="a" style="left:29px;top:199px;width:1251px;height:1px;background:#c6c6c6"></div><div class="a" style="left:65px;top:199px;width:1px;height:477px;background:#d9d9d9"></div><div class="a" style="left:79px;top:199px;width:1px;height:477px;background:#d9d9d9"></div><div class="a" style="left:93px;top:199px;width:1px;height:477px;background:#d9d9d9"></div><div class="a" style="left:259px;top:199px;width:1px;height:477px;background:#d9d9d9"></div><div class="a" style="left:336px;top:199px;width:1px;height:477px;background:#d9d9d9"></div><div class="a" style="left:413px;top:199px;width:1px;height:477px;background:#d9d9d9"></div><div class="a" style="left:490px;top:199px;width:1px;height:477px;background:#d9d9d9"></div><div class="a" style="left:567px;top:199px;width:1px;height:477px;background:#d9d9d9"></div><div class="a" style="left:644px;top:199px;width:1px;height:477px;background:#d9d9d9"></div><div class="a" style="left:721px;top:199px;width:1px;height:477px;background:#d9d9d9"></div><div class="a" style="left:798px;top:199px;width:1px;height:477px;background:#d9d9d9"></div><div class="a" style="left:875px;top:199px;width:1px;height:477px;background:#d9d9d9"></div><div class="a" style="left:952px;top:199px;width:1px;height:477px;background:#d9d9d9"></div><div class="a" style="left:1029px;top:199px;width:1px;height:477px;background:#d9d9d9"></div><div class="a" style="left:1106px;top:199px;width:1px;height:477px;background:#d9d9d9"></div><div class="a" style="left:1183px;top:199px;width:1px;height:477px;background:#d9d9d9"></div><div class="a" style="left:1260px;top:199px;width:1px;height:477px;background:#d9d9d9"></div><div class="a" style="left:51px;top:180px;width:1px;height:496px;background:#c6c6c6"></div><div class="c" style="left:29px;top:200.1px;width:22px;text-align:center;font-size:9.3px;color:#444">1</div><div class="c" style="left:29px;top:213.1px;width:22px;text-align:center;font-size:9.3px;color:#444">2</div><div class="c" style="left:29px;top:226.1px;width:22px;text-align:center;font-size:9.3px;color:#444">3</div><div class="c" style="left:29px;top:239.1px;width:22px;text-align:center;font-size:9.3px;color:#444">4</div><div class="c" style="left:29px;top:252.1px;width:22px;text-align:center;font-size:9.3px;color:#444">5</div><div class="c" style="left:29px;top:265.1px;width:22px;text-align:center;font-size:9.3px;color:#444">6</div><div class="c" style="left:29px;top:278.1px;width:22px;text-align:center;font-size:9.3px;color:#444">7</div><div class="c" style="left:29px;top:291.1px;width:22px;text-align:center;font-size:9.3px;color:#444">8</div><div class="c" style="left:29px;top:304.1px;width:22px;text-align:center;font-size:9.3px;color:#444">9</div><div class="c" style="left:29px;top:317.1px;width:22px;text-align:center;font-size:9.3px;color:#444">10</div><div class="c" style="left:29px;top:330.1px;width:22px;text-align:center;font-size:9.3px;color:#444">11</div><div class="c" style="left:29px;top:343.1px;width:22px;text-align:center;font-size:9.3px;color:#444">12</div><div class="c" style="left:29px;top:356.1px;width:22px;text-align:center;font-size:9.3px;color:#444">13</div><div class="c" style="left:29px;top:369.1px;width:22px;text-align:center;font-size:9.3px;color:#444">14</div><div class="c" style="left:29px;top:382.1px;width:22px;text-align:center;font-size:9.3px;color:#444">15</div><div class="c" style="left:29px;top:395.1px;width:22px;text-align:center;font-size:9.3px;color:#444">16</div><div class="c" style="left:29px;top:408.1px;width:22px;text-align:center;font-size:9.3px;color:#444">17</div><div class="c" style="left:29px;top:421.1px;width:22px;text-align:center;font-size:9.3px;color:#444">18</div><div class="c" style="left:29px;top:434.1px;width:22px;text-align:center;font-size:9.3px;color:#444">19</div><div class="c" style="left:29px;top:447.1px;width:22px;text-align:center;font-size:9.3px;color:#444">20</div><div class="c" style="left:29px;top:460.1px;width:22px;text-align:center;font-size:9.3px;color:#444">21</div><div class="c" style="left:29px;top:473.1px;width:22px;text-align:center;font-size:9.3px;color:#444">22</div><div class="c" style="left:29px;top:486.1px;width:22px;text-align:center;font-size:9.3px;color:#444">23</div><div class="c" style="left:29px;top:499.1px;width:22px;text-align:center;font-size:9.3px;color:#444">24</div><div class="c" style="left:29px;top:512.1px;width:22px;text-align:center;font-size:9.3px;color:#444">25</div><div class="c" style="left:29px;top:525.1px;width:22px;text-align:center;font-size:9.3px;color:#444">26</div><div class="c" style="left:29px;top:538.1px;width:22px;text-align:center;font-size:9.3px;color:#444">27</div><div class="c" style="left:29px;top:551.1px;width:22px;text-align:center;font-size:9.3px;color:#444">28</div><div class="c" style="left:29px;top:564.1px;width:22px;text-align:center;font-size:9.3px;color:#444">29</div><div class="a" style="left:29px;top:577px;width:22px;height:12px;background:#e6e6e6"></div><div class="c" style="left:29px;top:577.1px;width:22px;text-align:center;font-size:9.3px;color:#1e7145;font-weight:bold">30</div><div class="c" style="left:29px;top:590.1px;width:22px;text-align:center;font-size:9.3px;color:#444">31</div><div class="c" style="left:29px;top:603.1px;width:22px;text-align:center;font-size:9.3px;color:#444">32</div><div class="c" style="left:29px;top:616.1px;width:22px;text-align:center;font-size:9.3px;color:#444">33</div><div class="c" style="left:29px;top:629.1px;width:22px;text-align:center;font-size:9.3px;color:#444">34</div><div class="c" style="left:29px;top:642.1px;width:22px;text-align:center;font-size:9.3px;color:#444">35</div><div class="c" style="left:29px;top:655.1px;width:22px;text-align:center;font-size:9.3px;color:#444">36</div><div class="c" style="left:29px;top:668.1px;width:22px;text-align:center;font-size:9.3px;color:#444">37</div><div class="c r nm" style="left:260px;top:200px;width:76px;padding-right:1.69px">2017</div><div class="c r nm" style="left:337px;top:200px;width:76px;padding-right:1.69px">2018</div><div class="c r nm" style="left:414px;top:200px;width:76px;padding-right:1.69px">2019</div><div class="c r nm" style="left:491px;top:200px;width:76px;padding-right:1.69px">2020</div><div class="c r nm" style="left:568px;top:200px;width:76px;padding-right:1.69px">2021</div><div class="c r nm" style="left:645px;top:200px;width:76px;padding-right:1.69px">2022</div><div class="c r nm" style="left:722px;top:200px;width:76px;padding-right:1.69px">2023</div><div class="c r nm" style="left:799px;top:200px;width:76px;padding-right:1.69px">2024</div><div class="c r nm" style="left:876px;top:200px;width:76px;padding-right:1.69px">2025</div><div class="c r nm" style="left:953px;top:200px;width:76px;padding-right:1.69px">2026</div><div class="c r nm" style="left:1030px;top:200px;width:76px;padding-right:1.69px">2027</div><div class="c r nm" style="left:1107px;top:200px;width:76px;padding-right:1.69px">2028</div><div class="c r nm" style="left:1184px;top:200px;width:76px;padding-right:1.69px">2029</div><div class="c r nm" style="left:260px;top:408px;width:76px;padding-right:1.69px">2017</div><div class="c r nm" style="left:337px;top:408px;width:76px;padding-right:1.69px">2018</div><div class="c r nm" style="left:414px;top:408px;width:76px;padding-right:1.69px">2019</div><div class="c r nm" style="left:491px;top:408px;width:76px;padding-right:1.69px">2020</div><div class="c r nm" style="left:568px;top:408px;width:76px;padding-right:1.69px">2021</div><div class="c r nm" style="left:645px;top:408px;width:76px;padding-right:1.69px">2022</div><div class="c r nm" style="left:722px;top:408px;width:76px;padding-right:1.69px">2023</div><div class="c r nm" style="left:799px;top:408px;width:76px;padding-right:1.69px">2024</div><div class="c r nm" style="left:876px;top:408px;width:76px;padding-right:1.69px">2025</div><div class="c r nm" style="left:953px;top:408px;width:76px;padding-right:1.69px">2026</div><div class="c r nm" style="left:1030px;top:408px;width:76px;padding-right:1.69px">2027</div><div class="c r nm" style="left:1107px;top:408px;width:76px;padding-right:1.69px">2028</div><div class="c r nm" style="left:1184px;top:408px;width:76px;padding-right:1.69px">2029</div><div class="c r nm" style="left:260px;top:447px;width:76px;padding-right:1.69px">2017</div><div class="c r nm" style="left:337px;top:447px;width:76px;padding-right:1.69px">2018</div><div class="c r nm" style="left:414px;top:447px;width:76px;padding-right:1.69px">2019</div><div class="c r nm" style="left:491px;top:447px;width:76px;padding-right:1.69px">2020</div><div class="c r nm" style="left:568px;top:447px;width:76px;padding-right:1.69px">2021</div><div class="c r nm" style="left:645px;top:447px;width:76px;padding-right:1.69px">2022</div><div class="c r nm" style="left:722px;top:447px;width:76px;padding-right:1.69px">2023</div><div class="c r nm" style="left:799px;top:447px;width:76px;padding-right:1.69px">2024</div><div class="c r nm" style="left:876px;top:447px;width:76px;padding-right:1.69px">2025</div><div class="c r nm" style="left:953px;top:447px;width:76px;padding-right:1.69px">2026</div><div class="c r nm" style="left:1030px;top:447px;width:76px;padding-right:1.69px">2027</div><div class="c r nm" style="left:1107px;top:447px;width:76px;padding-right:1.69px">2028</div><div class="c r nm" style="left:1184px;top:447px;width:76px;padding-right:1.69px">2029</div><div class="c r nm" style="left:260px;top:512px;width:76px;padding-right:1.69px">2017</div><div class="c r nm" style="left:337px;top:512px;width:76px;padding-right:1.69px">2018</div><div class="c r nm" style="left:414px;top:512px;width:76px;padding-right:1.69px">2019</div><div class="c r nm" style="left:491px;top:512px;width:76px;padding-right:1.69px">2020</div><div class="c r nm" style="left:568px;top:512px;width:76px;padding-right:1.69px">2021</div><div class="c r nm" style="left:645px;top:512px;width:76px;padding-right:1.69px">2022</div><div class="c r nm" style="left:722px;top:512px;width:76px;padding-right:1.69px">2023</div><div class="c r nm" style="left:799px;top:512px;width:76px;padding-right:1.69px">2024</div><div class="c r nm" style="left:876px;top:512px;width:76px;padding-right:1.69px">2025</div><div class="c r nm" style="left:953px;top:512px;width:76px;padding-right:1.69px">2026</div><div class="c r nm" style="left:1030px;top:512px;width:76px;padding-right:1.69px">2027</div><div class="c r nm" style="left:1107px;top:512px;width:76px;padding-right:1.69px">2028</div><div class="c r nm" style="left:1184px;top:512px;width:76px;padding-right:1.69px">2029</div><div class="a" style="left:94px;top:226px;width:165px;height:12px;background:#fff"></div><div class="c lb" style="left:95.66px;top:226px;transform:scaleX(0.9128)">Hours</div><div class="c r nm" style="left:260px;top:226px;width:76px;padding-right:5.06px">8,016</div><div class="c r nm" style="left:337px;top:226px;width:76px;padding-right:5.06px">8,760</div><div class="c r nm" style="left:414px;top:226px;width:76px;padding-right:5.06px">8,760</div><div class="c r nm" style="left:491px;top:226px;width:76px;padding-right:5.06px">8,784</div><div class="c r nm" style="left:568px;top:226px;width:76px;padding-right:5.06px">8,760</div><div class="c r nm" style="left:645px;top:226px;width:76px;padding-right:5.06px">8,760</div><div class="c r nm" style="left:722px;top:226px;width:76px;padding-right:5.06px">8,760</div><div class="c r nm" style="left:799px;top:226px;width:76px;padding-right:5.06px">8,784</div><div class="c r nm" style="left:876px;top:226px;width:76px;padding-right:5.06px">8,760</div><div class="c r nm" style="left:953px;top:226px;width:76px;padding-right:5.06px">8,760</div><div class="c r nm" style="left:1030px;top:226px;width:76px;padding-right:5.06px">8,760</div><div class="c r nm" style="left:1107px;top:226px;width:76px;padding-right:5.06px">8,784</div><div class="c r nm" style="left:1184px;top:226px;width:76px;padding-right:5.06px">8,760</div><div class="a" style="left:94px;top:239px;width:165px;height:12px;background:#fff"></div><div class="c lb" style="left:95.93px;top:239px;transform:scaleX(0.933)">Generation</div><div class="c r nm" style="left:260px;top:239px;width:76px;padding-right:5.06px">3,864,960</div><div class="c r nm" style="left:337px;top:239px;width:76px;padding-right:5.06px">7,708,800</div><div class="c r nm" style="left:414px;top:239px;width:76px;padding-right:5.06px">7,708,800</div><div class="c r nm" style="left:491px;top:239px;width:76px;padding-right:5.06px">7,729,920</div><div class="c r nm" style="left:568px;top:239px;width:76px;padding-right:5.06px">7,708,800</div><div class="c r nm" style="left:645px;top:239px;width:76px;padding-right:5.06px">7,708,800</div><div class="c r nm" style="left:722px;top:239px;width:76px;padding-right:5.06px">7,708,800</div><div class="c r nm" style="left:799px;top:239px;width:76px;padding-right:5.06px">7,729,920</div><div class="c r nm" style="left:876px;top:239px;width:76px;padding-right:5.06px">7,708,800</div><div class="c r nm" style="left:953px;top:239px;width:76px;padding-right:5.06px">7,708,800</div><div class="c r nm" style="left:1030px;top:239px;width:76px;padding-right:5.06px">7,708,800</div><div class="c r nm" style="left:1107px;top:239px;width:76px;padding-right:5.06px">7,729,920</div><div class="c r nm" style="left:1184px;top:239px;width:76px;padding-right:5.06px">7,708,800</div><div class="a" style="left:94px;top:252px;width:165px;height:12px;background:#fff"></div><div class="c lb" style="left:95.93px;top:252px;transform:scaleX(0.9298)">Capacity revenue without penalty</div><div class="c r nm" style="left:260px;top:252px;width:76px;padding-right:5.06px">151,870</div><div class="c r nm" style="left:337px;top:252px;width:76px;padding-right:5.06px">303,740</div><div class="c r nm" style="left:414px;top:252px;width:76px;padding-right:5.06px">303,740</div><div class="c r nm" style="left:491px;top:252px;width:76px;padding-right:5.06px">303,740</div><div class="c r nm" style="left:568px;top:252px;width:76px;padding-right:5.06px">303,740</div><div class="c r nm" style="left:645px;top:252px;width:76px;padding-right:5.06px">303,740</div><div class="c r nm" style="left:722px;top:252px;width:76px;padding-right:5.06px">303,740</div><div class="c r nm" style="left:799px;top:252px;width:76px;padding-right:5.06px">303,740</div><div class="c r nm" style="left:876px;top:252px;width:76px;padding-right:5.06px">303,740</div><div class="c r nm" style="left:953px;top:252px;width:76px;padding-right:5.06px">303,740</div><div class="c r nm" style="left:1030px;top:252px;width:76px;padding-right:5.06px">303,740</div><div class="c r nm" style="left:1107px;top:252px;width:76px;padding-right:5.06px">303,740</div><div class="c r nm" style="left:1184px;top:252px;width:76px;padding-right:5.06px">303,740</div><div class="a" style="left:94px;top:265px;width:165px;height:12px;background:#fff"></div><div class="c lb" style="left:96.3px;top:265px;transform:scaleX(0.9424)">Availability penalty/bonus</div><div class="c nm" style="left:320px;top:265px">-</div><div class="c nm" style="left:397px;top:265px">-</div><div class="c nm" style="left:474px;top:265px">-</div><div class="c nm" style="left:551px;top:265px">-</div><div class="c nm" style="left:628px;top:265px">-</div><div class="c nm" style="left:705px;top:265px">-</div><div class="c nm" style="left:782px;top:265px">-</div><div class="c nm" style="left:859px;top:265px">-</div><div class="c nm" style="left:936px;top:265px">-</div><div class="c nm" style="left:1013px;top:265px">-</div><div class="c nm" style="left:1090px;top:265px">-</div><div class="c nm" style="left:1167px;top:265px">-</div><div class="c nm" style="left:1244px;top:265px">-</div><div class="a" style="left:94px;top:278px;width:165px;height:12px;background:#fff"></div><div class="c lb" style="left:95.66px;top:278px;transform:scaleX(0.9193)">Net capacity revenue</div><div class="c r nm" style="left:260px;top:278px;width:76px;padding-right:5.06px">151,870</div><div class="c r nm" style="left:337px;top:278px;width:76px;padding-right:5.06px">303,740</div><div class="c r nm" style="left:414px;top:278px;width:76px;padding-right:5.06px">303,740</div><div class="c r nm" style="left:491px;top:278px;width:76px;padding-right:5.06px">303,740</div><div class="c r nm" style="left:568px;top:278px;width:76px;padding-right:5.06px">303,740</div><div class="c r nm" style="left:645px;top:278px;width:76px;padding-right:5.06px">303,740</div><div class="c r nm" style="left:722px;top:278px;width:76px;padding-right:5.06px">303,740</div><div class="c r nm" style="left:799px;top:278px;width:76px;padding-right:5.06px">303,740</div><div class="c r nm" style="left:876px;top:278px;width:76px;padding-right:5.06px">303,740</div><div class="c r nm" style="left:953px;top:278px;width:76px;padding-right:5.06px">303,740</div><div class="c r nm" style="left:1030px;top:278px;width:76px;padding-right:5.06px">303,740</div><div class="c r nm" style="left:1107px;top:278px;width:76px;padding-right:5.06px">303,740</div><div class="c r nm" style="left:1184px;top:278px;width:76px;padding-right:5.06px">303,740</div><div class="a" style="left:94px;top:291px;width:165px;height:12px;background:#fff"></div><div class="c lb" style="left:95.68px;top:291px;transform:scaleX(0.8795)">Fuel used</div><div class="c r nm" style="left:260px;top:291px;width:76px;padding-right:5.06px">23,207,111</div><div class="c r nm" style="left:337px;top:291px;width:76px;padding-right:5.06px">46,356,984</div><div class="c r nm" style="left:414px;top:291px;width:76px;padding-right:5.06px">46,449,698</div><div class="c r nm" style="left:491px;top:291px;width:76px;padding-right:5.06px">46,670,016</div><div class="c r nm" style="left:568px;top:291px;width:76px;padding-right:5.06px">46,635,683</div><div class="c r nm" style="left:645px;top:291px;width:76px;padding-right:5.06px">46,728,954</div><div class="c r nm" style="left:722px;top:291px;width:76px;padding-right:5.06px">46,530,941</div><div class="c r nm" style="left:799px;top:291px;width:76px;padding-right:5.06px">46,460,681</div><div class="c r nm" style="left:876px;top:291px;width:76px;padding-right:5.06px">46,426,502</div><div class="c r nm" style="left:953px;top:291px;width:76px;padding-right:5.06px">46,519,355</div><div class="c r nm" style="left:1030px;top:291px;width:76px;padding-right:5.06px">46,612,394</div><div class="c r nm" style="left:1107px;top:291px;width:76px;padding-right:5.06px">46,833,483</div><div class="c r nm" style="left:1184px;top:291px;width:76px;padding-right:5.06px">46,519,288</div><div class="a" style="left:94px;top:304px;width:165px;height:12px;background:#fff"></div><div class="c lb" style="left:95.67px;top:304px;transform:scaleX(0.9066)">Fuel revenues</div><div class="c r nm" style="left:260px;top:304px;width:76px;padding-right:5.06px">980,633</div><div class="c r nm" style="left:337px;top:304px;width:76px;padding-right:5.06px">1,977,972</div><div class="c r nm" style="left:414px;top:304px;width:76px;padding-right:5.06px">2,007,693</div><div class="c r nm" style="left:491px;top:304px;width:76px;padding-right:5.06px">2,043,412</div><div class="c r nm" style="left:568px;top:304px;width:76px;padding-right:5.06px">2,068,481</div><div class="c r nm" style="left:645px;top:304px;width:76px;padding-right:5.06px">2,088,537</div><div class="c r nm" style="left:722px;top:304px;width:76px;padding-right:5.06px">2,108,873</div><div class="c r nm" style="left:799px;top:304px;width:76px;padding-right:5.06px">2,146,392</div><div class="c r nm" style="left:876px;top:304px;width:76px;padding-right:5.06px">2,172,725</div><div class="c r nm" style="left:953px;top:304px;width:76px;padding-right:5.06px">2,205,372</div><div class="c r nm" style="left:1030px;top:304px;width:76px;padding-right:5.06px">2,238,510</div><div class="c r nm" style="left:1107px;top:304px;width:76px;padding-right:5.06px">2,264,711</div><div class="c r nm" style="left:1184px;top:304px;width:76px;padding-right:5.06px">2,278,804</div><div class="a" style="left:94px;top:317px;width:165px;height:12px;background:#fff"></div><div class="c lb" style="left:95.68px;top:317px;transform:scaleX(0.8829)">Fuel expenses</div><div class="c r nm" style="left:260px;top:317px;width:76px;padding-right:5.06px">980,633</div><div class="c r nm" style="left:337px;top:317px;width:76px;padding-right:5.06px">1,977,972</div><div class="c r nm" style="left:414px;top:317px;width:76px;padding-right:5.06px">2,007,693</div><div class="c r nm" style="left:491px;top:317px;width:76px;padding-right:5.06px">2,043,412</div><div class="c r nm" style="left:568px;top:317px;width:76px;padding-right:5.06px">2,068,481</div><div class="c r nm" style="left:645px;top:317px;width:76px;padding-right:5.06px">2,099,562</div><div class="c r nm" style="left:722px;top:317px;width:76px;padding-right:5.06px">2,117,802</div><div class="c r nm" style="left:799px;top:317px;width:76px;padding-right:5.06px">2,142,108</div><div class="c r nm" style="left:876px;top:317px;width:76px;padding-right:5.06px">2,168,388</div><div class="c r nm" style="left:953px;top:317px;width:76px;padding-right:5.06px">2,200,970</div><div class="c r nm" style="left:1030px;top:317px;width:76px;padding-right:5.06px">2,234,042</div><div class="c r nm" style="left:1107px;top:317px;width:76px;padding-right:5.06px">2,273,789</div><div class="c r nm" style="left:1184px;top:317px;width:76px;padding-right:5.06px">2,287,881</div><div class="a" style="left:94px;top:330px;width:165px;height:12px;background:#fff"></div><div class="c lb" style="left:95.65px;top:330px;transform:scaleX(0.9218)">Heat Rate before degradation</div><div class="c r nm" style="left:260px;top:330px;width:76px;padding-right:5.06px">6,000</div><div class="c r nm" style="left:337px;top:330px;width:76px;padding-right:5.06px">6,000</div><div class="c r nm" style="left:414px;top:330px;width:76px;padding-right:5.06px">6,000</div><div class="c r nm" style="left:491px;top:330px;width:76px;padding-right:5.06px">6,000</div><div class="c r nm" style="left:568px;top:330px;width:76px;padding-right:5.06px">6,000</div><div class="c r nm" style="left:645px;top:330px;width:76px;padding-right:5.06px">6,000</div><div class="c r nm" style="left:722px;top:330px;width:76px;padding-right:5.06px">6,000</div><div class="c r nm" style="left:799px;top:330px;width:76px;padding-right:5.06px">6,000</div><div class="c r nm" style="left:876px;top:330px;width:76px;padding-right:5.06px">6,000</div><div class="c r nm" style="left:953px;top:330px;width:76px;padding-right:5.06px">6,000</div><div class="c r nm" style="left:1030px;top:330px;width:76px;padding-right:5.06px">6,000</div><div class="c r nm" style="left:1107px;top:330px;width:76px;padding-right:5.06px">6,000</div><div class="c r nm" style="left:1184px;top:330px;width:76px;padding-right:5.06px">6,000</div><div class="a" style="left:94px;top:343px;width:165px;height:12px;background:#fff"></div><div class="c lb" style="left:95.65px;top:343px;transform:scaleX(0.9266)">Heat Rate after degradation</div><div class="c r nm" style="left:260px;top:343px;width:76px;padding-right:5.06px">6,001</div><div class="c r nm" style="left:337px;top:343px;width:76px;padding-right:5.06px">6,014</div><div class="c r nm" style="left:414px;top:343px;width:76px;padding-right:5.06px">6,026</div><div class="c r nm" style="left:491px;top:343px;width:76px;padding-right:5.06px">6,038</div><div class="c r nm" style="left:568px;top:343px;width:76px;padding-right:5.06px">6,050</div><div class="c r nm" style="left:645px;top:343px;width:76px;padding-right:5.06px">6,062</div><div class="c r nm" style="left:722px;top:343px;width:76px;padding-right:5.06px">6,036</div><div class="c r nm" style="left:799px;top:343px;width:76px;padding-right:5.06px">6,010</div><div class="c r nm" style="left:876px;top:343px;width:76px;padding-right:5.06px">6,023</div><div class="c r nm" style="left:953px;top:343px;width:76px;padding-right:5.06px">6,035</div><div class="c r nm" style="left:1030px;top:343px;width:76px;padding-right:5.06px">6,047</div><div class="c r nm" style="left:1107px;top:343px;width:76px;padding-right:5.06px">6,059</div><div class="c r nm" style="left:1184px;top:343px;width:76px;padding-right:5.06px">6,035</div><div class="a" style="left:94px;top:421px;width:165px;height:12px;background:#fff"></div><div class="c lb" style="left:95.65px;top:421px;transform:scaleX(0.9266)">Heat Rate after degradation</div><div class="c r nm" style="left:260px;top:421px;width:76px;padding-right:5.06px">6,001</div><div class="c r nm" style="left:337px;top:421px;width:76px;padding-right:5.06px">6,014</div><div class="c r nm" style="left:414px;top:421px;width:76px;padding-right:5.06px">6,026</div><div class="c r nm" style="left:491px;top:421px;width:76px;padding-right:5.06px">6,038</div><div class="c r nm" style="left:568px;top:421px;width:76px;padding-right:5.06px">6,050</div><div class="c r nm" style="left:645px;top:421px;width:76px;padding-right:5.06px">6,062</div><div class="c r nm" style="left:722px;top:421px;width:76px;padding-right:5.06px">6,036</div><div class="c r nm" style="left:799px;top:421px;width:76px;padding-right:5.06px">6,010</div><div class="c r nm" style="left:876px;top:421px;width:76px;padding-right:5.06px">6,023</div><div class="c r nm" style="left:953px;top:421px;width:76px;padding-right:5.06px">6,035</div><div class="c r nm" style="left:1030px;top:421px;width:76px;padding-right:5.06px">6,047</div><div class="c r nm" style="left:1107px;top:421px;width:76px;padding-right:5.06px">6,059</div><div class="c r nm" style="left:1184px;top:421px;width:76px;padding-right:5.06px">6,035</div><div class="a" style="left:94px;top:460px;width:165px;height:12px;background:#fff"></div><div class="c lb" style="left:95.98px;top:460px;transform:scaleX(0.791)">CFADS</div><div class="a" style="left:94px;top:473px;width:165px;height:12px;background:#fff"></div><div class="c lb" style="left:95.67px;top:473px;transform:scaleX(0.8967)">Debt Service</div><div class="c r nm" style="left:260px;top:369px;width:76px;padding-right:1.69px">10</div><div class="a" style="left:95px;top:369px;width:128px;height:24px;background:#fff"></div><div class="t" style="left:97.3px;top:375.3px;font-size:10px;color:#111;transform:scaleX(0.922);transform-origin:0 0;-webkit-text-stroke:0.1px #111">Heat Rate after degradation</div><div class="a" style="left:221px;top:370px;width:16px;height:15px;background:linear-gradient(#e4e4e4,#cfcfcf);border:1px solid #222"></div><div class="a" style="left:224.5px;top:374.5px;width:0;height:0;border-left:4.5px solid transparent;border-right:4.5px solid transparent;border-top:5px solid #111"></div><div class="a" style="left:52px;top:538px;width:41px;height:12px;background:#fff"></div><div class="c lb" style="left:53.65px;top:538px;transform:scaleX(0.8647)">Cash Flow</div><div class="a" style="left:66px;top:551px;width:193px;height:12px;background:#fff"></div><div class="c lb" style="left:67.83px;top:551px;transform:scaleX(0.8207)">EBITDA</div><div class="c r nm" style="left:260px;top:551px;width:76px;padding-right:2.81px">151,870.13</div><div class="c r nm" style="left:337px;top:551px;width:76px;padding-right:2.81px">303,740.25</div><div class="c r nm" style="left:414px;top:551px;width:76px;padding-right:2.81px">303,740.25</div><div class="c r nm" style="left:491px;top:551px;width:76px;padding-right:2.81px">303,740.25</div><div class="c r nm" style="left:568px;top:551px;width:76px;padding-right:2.81px">303,740.25</div><div class="c r nm" style="left:645px;top:551px;width:76px;padding-right:2.81px">292,715.43</div><div class="c r nm" style="left:722px;top:551px;width:76px;padding-right:2.81px">294,811.51</div><div class="c r nm" style="left:799px;top:551px;width:76px;padding-right:2.81px">308,024.47</div><div class="c r nm" style="left:876px;top:551px;width:76px;padding-right:2.81px">308,077.03</div><div class="c r nm" style="left:953px;top:551px;width:76px;padding-right:2.81px">308,142.19</div><div class="c r nm" style="left:1030px;top:551px;width:76px;padding-right:2.81px">308,208.34</div><div class="c r nm" style="left:1107px;top:551px;width:76px;padding-right:2.81px">294,662.52</div><div class="c r nm" style="left:1184px;top:551px;width:76px;padding-right:2.81px">294,663.32</div><div class="a" style="left:66px;top:564px;width:193px;height:12px;background:#fff"></div><div class="c lb" style="left:67.81px;top:564px;transform:scaleX(0.8443)">Less WC Change</div><div class="c r nm" style="left:260px;top:564px;width:76px;padding-right:2.81px">0.00</div><div class="c r nm" style="left:337px;top:564px;width:76px;padding-right:2.81px">0.00</div><div class="c r nm" style="left:414px;top:564px;width:76px;padding-right:2.81px">0.00</div><div class="c r nm" style="left:491px;top:564px;width:76px;padding-right:2.81px">0.00</div><div class="c r nm" style="left:568px;top:564px;width:76px;padding-right:2.81px">0.00</div><div class="c r nm" style="left:645px;top:564px;width:76px;padding-right:2.81px">0.00</div><div class="c r nm" style="left:722px;top:564px;width:76px;padding-right:2.81px">0.00</div><div class="c r nm" style="left:799px;top:564px;width:76px;padding-right:2.81px">0.00</div><div class="c r nm" style="left:876px;top:564px;width:76px;padding-right:2.81px">0.00</div><div class="c r nm" style="left:953px;top:564px;width:76px;padding-right:2.81px">0.00</div><div class="c r nm" style="left:1030px;top:564px;width:76px;padding-right:2.81px">0.00</div><div class="c r nm" style="left:1107px;top:564px;width:76px;padding-right:2.81px">0.00</div><div class="c r nm" style="left:1184px;top:564px;width:76px;padding-right:2.81px">0.00</div><div class="a" style="left:66px;top:577px;width:193px;height:12px;background:#fff"></div><div class="c lb" style="left:68.4px;top:577px;transform:scaleX(0.921)">Add Interest Income</div><div class="c r nm" style="left:260px;top:577px;width:76px;padding-right:2.81px">0.00</div><div class="c r nm" style="left:337px;top:577px;width:76px;padding-right:2.81px">0.00</div><div class="c r nm" style="left:414px;top:577px;width:76px;padding-right:2.81px">0.00</div><div class="c r nm" style="left:491px;top:577px;width:76px;padding-right:2.81px">0.00</div><div class="c r nm" style="left:568px;top:577px;width:76px;padding-right:2.81px">0.00</div><div class="c r nm" style="left:645px;top:577px;width:76px;padding-right:2.81px">0.00</div><div class="c r nm" style="left:722px;top:577px;width:76px;padding-right:2.81px">0.00</div><div class="c r nm" style="left:799px;top:577px;width:76px;padding-right:2.81px">0.00</div><div class="c r nm" style="left:876px;top:577px;width:76px;padding-right:2.81px">0.00</div><div class="c r nm" style="left:953px;top:577px;width:76px;padding-right:2.81px">0.00</div><div class="c r nm" style="left:1030px;top:577px;width:76px;padding-right:2.81px">0.00</div><div class="c r nm" style="left:1107px;top:577px;width:76px;padding-right:2.81px">0.00</div><div class="c r nm" style="left:1184px;top:577px;width:76px;padding-right:2.81px">0.00</div><div class="a" style="left:66px;top:590px;width:193px;height:12px;background:#fff"></div><div class="c lb" style="left:67.81px;top:590px;transform:scaleX(0.8473)">Less Taxes</div><div class="c r nm" style="left:260px;top:590px;width:76px;padding-right:2.81px">0.00</div><div class="c r nm" style="left:337px;top:590px;width:76px;padding-right:2.81px">0.00</div><div class="c r nm" style="left:414px;top:590px;width:76px;padding-right:2.81px">0.00</div><div class="c r nm" style="left:491px;top:590px;width:76px;padding-right:2.81px">0.00</div><div class="c r nm" style="left:568px;top:590px;width:76px;padding-right:2.81px">0.00</div><div class="c r nm" style="left:645px;top:590px;width:76px;padding-right:2.81px">0.00</div><div class="c r nm" style="left:722px;top:590px;width:76px;padding-right:2.81px">0.00</div><div class="c r nm" style="left:799px;top:590px;width:76px;padding-right:2.81px">0.00</div><div class="c r nm" style="left:876px;top:590px;width:76px;padding-right:2.81px">0.00</div><div class="c r nm" style="left:953px;top:590px;width:76px;padding-right:2.81px">0.00</div><div class="c r nm" style="left:1030px;top:590px;width:76px;padding-right:2.81px">0.00</div><div class="c r nm" style="left:1107px;top:590px;width:76px;padding-right:2.81px">0.00</div><div class="c r nm" style="left:1184px;top:590px;width:76px;padding-right:2.81px">0.00</div><div class="a" style="left:80px;top:603px;width:179px;height:12px;background:#fff"></div><div class="c lb" style="left:81.65px;top:603px;transform:scaleX(0.8698)">Subtotal CFADS</div><div class="c r nm" style="left:260px;top:603px;width:76px;padding-right:2.81px">151,870.13</div><div class="c r nm" style="left:337px;top:603px;width:76px;padding-right:2.81px">303,740.25</div><div class="c r nm" style="left:414px;top:603px;width:76px;padding-right:2.81px">303,740.25</div><div class="c r nm" style="left:491px;top:603px;width:76px;padding-right:2.81px">303,740.25</div><div class="c r nm" style="left:568px;top:603px;width:76px;padding-right:2.81px">303,740.25</div><div class="c r nm" style="left:645px;top:603px;width:76px;padding-right:2.81px">292,715.43</div><div class="c r nm" style="left:722px;top:603px;width:76px;padding-right:2.81px">294,811.51</div><div class="c r nm" style="left:799px;top:603px;width:76px;padding-right:2.81px">308,024.47</div><div class="c r nm" style="left:876px;top:603px;width:76px;padding-right:2.81px">308,077.03</div><div class="c r nm" style="left:953px;top:603px;width:76px;padding-right:2.81px">308,142.19</div><div class="c r nm" style="left:1030px;top:603px;width:76px;padding-right:2.81px">308,208.34</div><div class="c r nm" style="left:1107px;top:603px;width:76px;padding-right:2.81px">294,662.52</div><div class="c r nm" style="left:1184px;top:603px;width:76px;padding-right:2.81px">294,663.32</div><div class="a" style="left:66px;top:616px;width:193px;height:12px;background:#fff"></div><div class="c lb" style="left:67.78px;top:616px;transform:scaleX(0.8874)">Less Senior Debt Repayment</div><div class="c r nm" style="left:260px;top:616px;width:76px;padding-right:2.81px">65,139.02</div><div class="c r nm" style="left:337px;top:616px;width:76px;padding-right:2.81px">133,767.21</div><div class="c r nm" style="left:414px;top:616px;width:76px;padding-right:2.81px">134,567.24</div><div class="c r nm" style="left:491px;top:616px;width:76px;padding-right:2.81px">135,575.24</div><div class="c r nm" style="left:568px;top:616px;width:76px;padding-right:2.81px">140,776.05</div><div class="c r nm" style="left:645px;top:616px;width:76px;padding-right:2.81px">133,516.47</div><div class="c r nm" style="left:722px;top:616px;width:76px;padding-right:2.81px">136,903.77</div><div class="c r nm" style="left:799px;top:616px;width:76px;padding-right:2.81px">153,737.75</div><div class="c r nm" style="left:876px;top:616px;width:76px;padding-right:2.81px">160,071.31</div><div class="c r nm" style="left:953px;top:616px;width:76px;padding-right:2.81px">166,674.69</div><div class="c r nm" style="left:1030px;top:616px;width:76px;padding-right:2.81px">173,549.03</div><div class="c r nm" style="left:1107px;top:616px;width:76px;padding-right:2.81px">169,361.52</div><div class="c r nm" style="left:1184px;top:616px;width:76px;padding-right:2.81px">176,060.75</div><div class="a" style="left:66px;top:629px;width:193px;height:12px;background:#fff"></div><div class="c lb" style="left:67.77px;top:629px;transform:scaleX(0.8993)">Less Senior Debt Interest</div><div class="c r nm" style="left:260px;top:629px;width:76px;padding-right:2.81px">61,419.42</div><div class="c r nm" style="left:337px;top:629px;width:76px;padding-right:2.81px">119,349.67</div><div class="c r nm" style="left:414px;top:629px;width:76px;padding-right:2.81px">118,549.63</div><div class="c r nm" style="left:491px;top:629px;width:76px;padding-right:2.81px">117,541.64</div><div class="c r nm" style="left:568px;top:629px;width:76px;padding-right:2.81px">112,340.83</div><div class="c r nm" style="left:645px;top:629px;width:76px;padding-right:2.81px">110,413.05</div><div class="c r nm" style="left:722px;top:629px;width:76px;padding-right:2.81px">108,772.49</div><div class="c r nm" style="left:799px;top:629px;width:76px;padding-right:2.81px">102,949.31</div><div class="c r nm" style="left:876px;top:629px;width:76px;padding-right:2.81px">96,659.55</div><div class="c r nm" style="left:953px;top:629px;width:76px;padding-right:2.81px">90,110.48</div><div class="c r nm" style="left:1030px;top:629px;width:76px;padding-right:2.81px">83,291.25</div><div class="c r nm" style="left:1107px;top:629px;width:76px;padding-right:2.81px">76,190.58</div><div class="c r nm" style="left:1184px;top:629px;width:76px;padding-right:2.81px">69,492.01</div><div class="a" style="left:80px;top:642px;width:179px;height:12px;background:#fff"></div><div class="c lb" style="left:81.64px;top:642px;transform:scaleX(0.9043)">Subtotal CF After Senior Debt</div><div class="c r nm" style="left:260px;top:642px;width:76px;padding-right:2.81px">25,311.69</div><div class="c r nm" style="left:337px;top:642px;width:76px;padding-right:2.81px">50,623.38</div><div class="c r nm" style="left:414px;top:642px;width:76px;padding-right:2.81px">50,623.38</div><div class="c r nm" style="left:491px;top:642px;width:76px;padding-right:2.81px">50,623.38</div><div class="c r nm" style="left:568px;top:642px;width:76px;padding-right:2.81px">50,623.38</div><div class="c r nm" style="left:645px;top:642px;width:76px;padding-right:2.81px">48,785.90</div><div class="c r nm" style="left:722px;top:642px;width:76px;padding-right:2.81px">49,135.25</div><div class="c r nm" style="left:799px;top:642px;width:76px;padding-right:2.81px">51,337.41</div><div class="c r nm" style="left:876px;top:642px;width:76px;padding-right:2.81px">51,346.17</div><div class="c r nm" style="left:953px;top:642px;width:76px;padding-right:2.81px">51,357.03</div><div class="c r nm" style="left:1030px;top:642px;width:76px;padding-right:2.81px">51,368.06</div><div class="c r nm" style="left:1107px;top:642px;width:76px;padding-right:2.81px">49,110.42</div><div class="c r nm" style="left:1184px;top:642px;width:76px;padding-right:2.81px">49,110.55</div><div class="a" style="left:66px;top:655px;width:193px;height:12px;background:#fff"></div><div class="c lb" style="left:68.4px;top:655px;transform:scaleX(0.9011)">Add Withdrawals from DSRA</div><div class="c r nm" style="left:260px;top:655px;width:76px;padding-right:2.81px">0.00</div><div class="c r nm" style="left:337px;top:655px;width:76px;padding-right:2.81px">0.00</div><div class="c r nm" style="left:414px;top:655px;width:76px;padding-right:2.81px">0.00</div><div class="c r nm" style="left:491px;top:655px;width:76px;padding-right:2.81px">0.00</div><div class="c r nm" style="left:568px;top:655px;width:76px;padding-right:2.81px">0.00</div><div class="c r nm" style="left:645px;top:655px;width:76px;padding-right:2.81px">0.00</div><div class="c r nm" style="left:722px;top:655px;width:76px;padding-right:2.81px">0.00</div><div class="c r nm" style="left:799px;top:655px;width:76px;padding-right:2.81px">0.00</div><div class="c r nm" style="left:876px;top:655px;width:76px;padding-right:2.81px">0.00</div><div class="c r nm" style="left:953px;top:655px;width:76px;padding-right:2.81px">0.00</div><div class="c r nm" style="left:1030px;top:655px;width:76px;padding-right:2.81px">0.00</div><div class="c r nm" style="left:1107px;top:655px;width:76px;padding-right:2.81px">0.00</div><div class="c r nm" style="left:1184px;top:655px;width:76px;padding-right:2.81px">0.00</div><div class="a" style="left:66px;top:668px;width:193px;height:12px;background:#fff"></div><div class="c lb" style="left:67.77px;top:668px;transform:scaleX(0.8977)">Less Contributions/Top Up to DSRA</div><div class="c r nm" style="left:260px;top:668px;width:76px;padding-right:2.81px">0.00</div><div class="c r nm" style="left:337px;top:668px;width:76px;padding-right:2.81px">0.00</div><div class="c r nm" style="left:414px;top:668px;width:76px;padding-right:2.81px">0.00</div><div class="c r nm" style="left:491px;top:668px;width:76px;padding-right:2.81px">0.00</div><div class="c r nm" style="left:568px;top:668px;width:76px;padding-right:2.81px">0.00</div><div class="c r nm" style="left:645px;top:668px;width:76px;padding-right:2.81px">0.00</div><div class="c r nm" style="left:722px;top:668px;width:76px;padding-right:2.81px">0.00</div><div class="c r nm" style="left:799px;top:668px;width:76px;padding-right:2.81px">0.00</div><div class="c r nm" style="left:876px;top:668px;width:76px;padding-right:2.81px">0.00</div><div class="c r nm" style="left:953px;top:668px;width:76px;padding-right:2.81px">0.00</div><div class="c r nm" style="left:1030px;top:668px;width:76px;padding-right:2.81px">0.00</div><div class="c r nm" style="left:1107px;top:668px;width:76px;padding-right:2.81px">0.00</div><div class="c r nm" style="left:1184px;top:668px;width:76px;padding-right:2.81px">0.00</div><div class="a" style="left:79px;top:602px;width:1201px;height:1px;background:#000"></div><div class="a" style="left:79px;top:615px;width:1201px;height:1px;background:#000"></div><div class="a" style="left:79px;top:602px;width:1px;height:14px;background:#d9d9d9"></div><div class="a" style="left:79px;top:641px;width:1201px;height:1px;background:#000"></div><div class="a" style="left:79px;top:654px;width:1201px;height:1px;background:#000"></div><div class="a" style="left:79px;top:641px;width:1px;height:14px;background:#d9d9d9"></div><div class="a" style="left:52px;top:198px;width:14px;height:2px;background:#1e7145"></div><div class="a" style="left:50px;top:575px;width:17px;height:16px;border:2px solid #1e7145"></div><div class="a" style="left:62px;top:585px;width:7px;height:7px;background:#1e7145;border:1px solid #fff"></div><div class="a" style="left:0;top:676px;width:1280px;height:26px;background:#ededed"></div><div class="a" style="left:0;top:676px;width:1280px;height:1px;background:#cfcfcf"></div><div class="a" style="left:0;top:701px;width:1280px;height:1px;background:#b5b5b5"></div><div class="a" style="left:66px;top:676px;width:324px;height:3px;background:#9cc58a"></div><div class="a" style="left:269px;top:676px;width:2px;height:3px;background:#ededed"></div><div class="a" style="left:15px;top:684px;width:0;height:0;border-top:5px solid transparent;border-bottom:5px solid transparent;border-right:7px solid #6e6e6e"></div><div class="a" style="left:38px;top:684px;width:0;height:0;border-top:5px solid transparent;border-bottom:5px solid transparent;border-left:7px solid #8a8a8a"></div><div class="a" style="left:60.5px;top:681px;width:1px;height:17px;background:#cdcdcd"></div><div class="a" style="left:269.5px;top:681px;width:1px;height:17px;background:#cdcdcd"></div><div class="a" style="left:390.5px;top:681px;width:1px;height:17px;background:#cdcdcd"></div><div class="a" style="left:509px;top:681px;width:1px;height:17px;background:#cdcdcd"></div><div class="a" style="left:612.5px;top:681px;width:1px;height:17px;background:#cdcdcd"></div><div class="a" style="left:977px;top:681px;width:1px;height:17px;background:#cdcdcd"></div><div class="a" style="left:1065px;top:681px;width:1px;height:17px;background:#cdcdcd"></div><div class="a" style="left:1196.5px;top:681px;width:1px;height:17px;background:#cdcdcd"></div><div class="a" style="left:1234px;top:681px;width:1px;height:17px;background:#cdcdcd"></div><div class="t" style="left:73px;top:682.5px;font-size:12.4px;color:#5f5f5f">EBITDA and Capital Expenditures</div><div class="t" style="left:282px;top:682.5px;font-size:12.69px;color:#5f5f5f">Project Financing</div><div class="t" style="left:402.5px;top:682.5px;font-size:12.49px;color:#5f5f5f">Tornado Diagram</div><div class="t" style="left:521.5px;top:682.5px;font-size:12.45px;color:#5f5f5f">Tornado Chart</div><div class="t" style="left:624.5px;top:682.5px;font-size:12.36px;color:#5f5f5f">Waterfall Chart</div><div class="t" style="left:844.5px;top:682.5px;font-size:12.31px;color:#5f5f5f">Annual Analysis Chart</div><div class="t" style="left:989.5px;top:682.5px;font-size:12.37px;color:#5f5f5f">Audit Sheet</div><div class="t" style="left:1077.5px;top:682.5px;font-size:12.4px;color:#5f5f5f">Waterfall Chartdata</div><div class="a" style="left:62px;top:680px;width:28px;height:18px;background:linear-gradient(90deg,#ededed 38%,rgba(237,237,237,0.55) 60%,rgba(237,237,237,0))"></div><div class="a" style="left:719px;top:676px;width:114px;height:23px;background:#fff;border-radius:0 0 3px 3px;box-shadow:0 1px 1.5px rgba(0,0,0,0.35)"></div><div class="t" style="left:730.5px;top:683px;font-size:11.7px;color:#1e7145;font-weight:bold">Annual Analysis</div><div class="a" style="left:1211px;top:687.5px;width:10px;height:2px;background:#555"></div><div class="a" style="left:1215px;top:683.5px;width:2px;height:10px;background:#555"></div><div class="a" style="left:0;top:702px;width:1280px;height:22px;background:linear-gradient(#d8d8d8,#c9c9c9)"></div><div class="t" style="left:24.5px;top:708px;font-size:12.3px;color:#555">Ready</div><div class="a" style="left:995px;top:702px;width:36px;height:22px;background:linear-gradient(#bdbdbd,#b3b3b3)"></div><svg class="a" style="left:1006px;top:706px" width="14" height="14" viewBox="0 0 14 14"><rect x="0.5" y="0.5" width="13" height="13" fill="none" stroke="#f2f2f2"/><path d="M0.5 4.8h13M0.5 9.2h13M4.8 0.5v13M9.2 0.5v13" stroke="#f2f2f2"/></svg><svg class="a" style="left:1042px;top:706px" width="14" height="14" viewBox="0 0 14 14"><rect x="0.5" y="0.5" width="13" height="13" fill="none" stroke="#666"/><rect x="2.5" y="2.5" width="9" height="9" fill="none" stroke="#666"/><path d="M4.5 5h5M4.5 7h5M4.5 9h5" stroke="#666" stroke-width="0.8"/></svg><div class="a" style="left:1075px;top:713px;width:8px;height:1.5px;background:#555"></div><div class="a" style="left:1090px;top:712px;width:100px;height:3px;border-radius:2px;background:#9a9a9a"></div><div class="a" style="left:1129px;top:707.5px;width:12px;height:12px;border-radius:50%;background:linear-gradient(#fff,#eaeaea);border:0.5px solid #a9a9a9;box-shadow:0 0.5px 1px rgba(0,0,0,.3)"></div><div class="a" style="left:1197px;top:713px;width:8px;height:1.5px;background:#555"></div><div class="a" style="left:1200.25px;top:709.75px;width:1.5px;height:8px;background:#555"></div><div class="t" style="left:1225px;top:708px;font-size:12.3px;color:#555">90%</div></body></html>
